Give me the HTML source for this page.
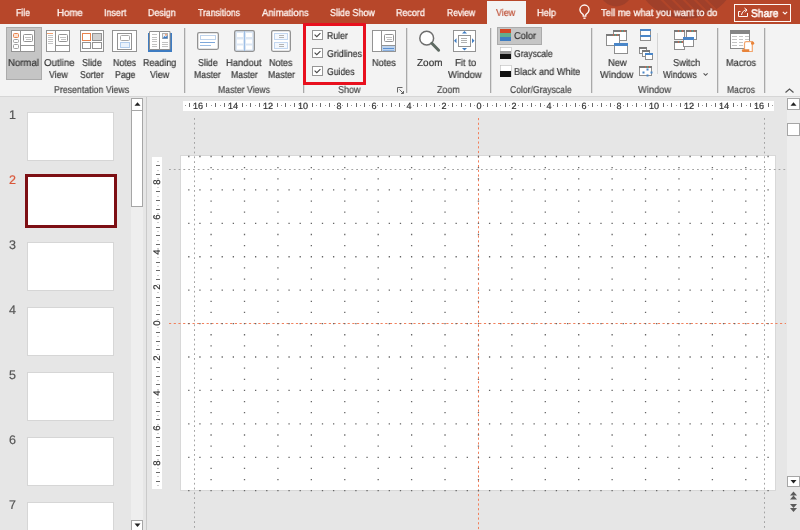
<!DOCTYPE html>
<html><head><meta charset="utf-8"><style>
html,body{margin:0;padding:0;width:800px;height:530px;overflow:hidden;background:#E6E6E6}
.t{position:absolute;white-space:nowrap;font-family:'Liberation Sans', sans-serif;transform-origin:0 0;will-change:transform;text-rendering:geometricPrecision;-webkit-text-stroke:0.2px currentColor}
svg{position:absolute;left:0;top:0}
</style></head><body>
<svg width="800" height="530" viewBox="0 0 800 530">
<rect x="0" y="0" width="800" height="530" fill="#E6E6E6" />
<rect x="0" y="0" width="800" height="24" fill="#B7472A" />
<defs><clipPath id="bc"><circle cx="686" cy="-34.4" r="53.1"/></clipPath></defs>
<circle cx="686" cy="-34.4" r="53.1" fill="#A0402A"/>
<g clip-path="url(#bc)" stroke="#B04529" stroke-width="2"><line x1="660" y1="-2" x2="674" y2="12"/><line x1="671" y1="-2" x2="685" y2="12"/><line x1="682" y1="-2" x2="696" y2="12"/><line x1="693" y1="-2" x2="707" y2="12"/><line x1="704" y1="-2" x2="718" y2="12"/></g>
<circle cx="616" cy="-10" r="16.4" fill="#A0402A"/>
<circle cx="616" cy="-4" r="4" fill="#A84329"/>
<rect x="0" y="24" width="800" height="72" fill="#F3F3F3" />
<rect x="0" y="96" width="800" height="1" fill="#D6D6D6" />
<rect x="487" y="1" width="39" height="23" fill="#F3F3F3" />
<path d="M583.2 16.2 v-1.6 c-2-1.3 -3.3-3 -3.3-5 a4.6 4.6 0 0 1 9.2 0 c0 2 -1.3 3.7 -3.3 5 v1.6 z" fill="none" stroke="#FFF7F4" stroke-width="1.3" />
<line x1="583.4" y1="18.2" x2="585.6" y2="18.2" stroke="#FFF7F4" stroke-width="1.4" />
<rect x="734.5" y="4.5" width="56" height="17" fill="none" stroke="#FFF7F4" stroke-width="1" rx="0" />
<path d="M740.5 11.5 h-2 v5 h9 v-3.5" fill="none" stroke="#FFF7F4" stroke-width="1" />
<path d="M741.5 15 c0.5-3 2.5-5 5.5-5.5 M744.5 8 l2.5 2 l-2 2.3" fill="none" stroke="#FFF7F4" stroke-width="1" />
<path d="M782.8 11.8 l2.2 2.2 l2.2 -2.2" fill="none" stroke="#FFF7F4" stroke-width="1.1" />
<rect x="184" y="28" width="1" height="65" fill="#A9A9A9" />
<rect x="185" y="28" width="1" height="65" fill="#DEDEDE" />
<rect x="303" y="28" width="1" height="65" fill="#A9A9A9" />
<rect x="304" y="28" width="1" height="65" fill="#DEDEDE" />
<rect x="406" y="28" width="1" height="65" fill="#A9A9A9" />
<rect x="407" y="28" width="1" height="65" fill="#DEDEDE" />
<rect x="490" y="28" width="1" height="65" fill="#A9A9A9" />
<rect x="491" y="28" width="1" height="65" fill="#DEDEDE" />
<rect x="591" y="28" width="1" height="65" fill="#A9A9A9" />
<rect x="592" y="28" width="1" height="65" fill="#DEDEDE" />
<rect x="717" y="28" width="1" height="65" fill="#A9A9A9" />
<rect x="718" y="28" width="1" height="65" fill="#DEDEDE" />
<rect x="764" y="28" width="1" height="65" fill="#A9A9A9" />
<rect x="765" y="28" width="1" height="65" fill="#DEDEDE" />
<rect x="657" y="33" width="1" height="41" fill="#D4D4D4" />
<rect x="6.5" y="27.5" width="35" height="52" fill="#C5C5C5" stroke="#ABABAB" stroke-width="1" rx="0" />
<rect x="11.5" y="30.5" width="23" height="21" fill="#FFFFFF" stroke="#939393" stroke-width="1" rx="0" />
<rect x="20" y="31" width="1" height="20" fill="#939393" />
<rect x="21" y="45" width="13" height="1" fill="#939393" />
<rect x="13.5" y="33.5" width="5" height="4" fill="#FBE3D3" stroke="#E8834E" stroke-width="1" rx="1" />
<rect x="13.5" y="39.5" width="5" height="3" fill="#FFF" stroke="#A0A0A0" stroke-width="1" rx="1" />
<rect x="13.5" y="44.5" width="5" height="4" fill="#FFF" stroke="#A0A0A0" stroke-width="1" rx="1" />
<rect x="23.5" y="34.5" width="9" height="7" fill="#FFF" stroke="#939393" stroke-width="1" rx="1" />
<rect x="25" y="37" width="6" height="1" fill="#C0C0C0" />
<rect x="26" y="39" width="5" height="1" fill="#C0C0C0" />
<rect x="46.5" y="30.5" width="23" height="21" fill="#FFF" stroke="#939393" stroke-width="1" rx="0" />
<rect x="55" y="31" width="1" height="20" fill="#939393" />
<rect x="56" y="45" width="13" height="1" fill="#939393" />
<rect x="47" y="33" width="6" height="1" fill="#F0A070" />
<rect x="48" y="35" width="5" height="1" fill="#C4C4C4" />
<rect x="48" y="37" width="5" height="1" fill="#C4C4C4" />
<rect x="48" y="39" width="5" height="1" fill="#C4C4C4" />
<rect x="48" y="41" width="5" height="1" fill="#C4C4C4" />
<rect x="48" y="43" width="5" height="1" fill="#C4C4C4" />
<rect x="58.5" y="34.5" width="9" height="7" fill="#FFF" stroke="#939393" stroke-width="1" rx="1" />
<rect x="60" y="37" width="6" height="1" fill="#C0C0C0" />
<rect x="61" y="39" width="5" height="1" fill="#C0C0C0" />
<rect x="80.5" y="30.5" width="23" height="21" fill="#FFF" stroke="#939393" stroke-width="1" rx="0" />
<rect x="82.5" y="33.5" width="8" height="7" fill="#FFF" stroke="#E8834E" stroke-width="1" rx="0" />
<rect x="92.5" y="33.5" width="9" height="7" fill="#D0D0D0" stroke="#939393" stroke-width="1" rx="0" />
<rect x="82.5" y="42.5" width="8" height="6" fill="#FFF" stroke="#939393" stroke-width="1" rx="0" />
<rect x="92.5" y="42.5" width="9" height="6" fill="#FFF" stroke="#939393" stroke-width="1" rx="0" />
<rect x="112.5" y="30.5" width="24" height="21" fill="#FFF" stroke="#939393" stroke-width="1" rx="0" />
<rect x="117.5" y="33.5" width="14" height="16" fill="#FFF" stroke="#939393" stroke-width="1" rx="0" />
<rect x="120.5" y="35.5" width="9" height="5" fill="#FFF" stroke="#A8A8A8" stroke-width="1" rx="1" />
<rect x="120.5" y="42.5" width="9" height="5" fill="#EAF2FB" stroke="#6FA0D8" stroke-width="1" rx="0" stroke-dasharray="1 1"/>
<rect x="148" y="33" width="24" height="19" fill="#3E7CC2" />
<path d="M149.5 31.5 h10 v18 h-10 z" fill="#FFF" stroke="#8E8E8E" stroke-width="1" />
<path d="M159.5 31.5 h10.5 v18 h-10.5 z" fill="#FFF" stroke="#8E8E8E" stroke-width="1" />
<rect x="152" y="34" width="5" height="1" fill="#C2C2C2" />
<rect x="152" y="37" width="5" height="1" fill="#C2C2C2" />
<rect x="152" y="39" width="5" height="1" fill="#C2C2C2" />
<rect x="152" y="41" width="5" height="1" fill="#C2C2C2" />
<rect x="152" y="44" width="5" height="1" fill="#C2C2C2" />
<rect x="152" y="46" width="5" height="1" fill="#C2C2C2" />
<rect x="162.5" y="33.5" width="5" height="5" fill="#EAF1FA" stroke="#B0B0B0" stroke-width="1" rx="0" />
<path d="M162.5 38.5 l2-2.5 l1.2 1 l1.8-1.8 v3.3 z" fill="#3E7CC2" stroke="none" stroke-width="1" />
<circle cx="166" cy="34.8" r="0.9" fill="#F0894F"/>
<rect x="162" y="42" width="6" height="1" fill="#C2C2C2" />
<rect x="162" y="44" width="6" height="1" fill="#C2C2C2" />
<rect x="162" y="46" width="6" height="1" fill="#C2C2C2" />
<rect x="197.65" y="32.65" width="20.7" height="16.7" fill="#FFF" stroke="#939393" stroke-width="1.3" rx="1.5" />
<rect x="200.5" y="35.5" width="15" height="4" fill="none" stroke="#7DA7D9" stroke-width="1" rx="0" stroke-dasharray="1 1"/>
<rect x="200" y="42" width="15" height="1" fill="#7DA7D9" />
<rect x="200" y="45" width="11" height="1" fill="#9DBEE5" />
<rect x="234.65" y="30.65" width="19.7" height="20.7" fill="#DCE7F4" stroke="#939393" stroke-width="1.3" rx="1.5" />
<rect x="244" y="31" width="1" height="20" fill="#9DBEE5" />
<rect x="237" y="33" width="6" height="4" fill="#FFF" />
<rect x="246" y="33" width="6" height="4" fill="#FFF" />
<rect x="237" y="39.5" width="6" height="4" fill="#FFF" />
<rect x="246" y="39.5" width="6" height="4" fill="#FFF" />
<rect x="237" y="45.5" width="6" height="4" fill="#FFF" />
<rect x="246" y="45.5" width="6" height="4" fill="#FFF" />
<rect x="271.65" y="30.65" width="18.7" height="20.7" fill="#FFF" stroke="#939393" stroke-width="1.3" rx="1.5" />
<rect x="274.5" y="33.5" width="13" height="6" fill="#F4F8FD" stroke="#8DB3E2" stroke-width="1" rx="0" stroke-dasharray="1 1"/>
<rect x="274.5" y="42.5" width="13" height="6" fill="#F4F8FD" stroke="#8DB3E2" stroke-width="1" rx="0" stroke-dasharray="1 1"/>
<rect x="279" y="35" width="5" height="1" fill="#B4B4B4" />
<rect x="279" y="37" width="5" height="1" fill="#B4B4B4" />
<rect x="279" y="44" width="5" height="1" fill="#B4B4B4" />
<rect x="279" y="46" width="5" height="1" fill="#B4B4B4" />
<rect x="312.5" y="30.5" width="10" height="9" fill="#FFFFFF" stroke="#969696" stroke-width="1" rx="0" />
<path d="M314.6 34.6 l2.2 2.1 l3.6 -3.5" fill="none" stroke="#484848" stroke-width="1.1" />
<rect x="312.5" y="48.5" width="10" height="9" fill="#FFFFFF" stroke="#969696" stroke-width="1" rx="0" />
<path d="M314.6 52.6 l2.2 2.1 l3.6 -3.5" fill="none" stroke="#484848" stroke-width="1.1" />
<rect x="312.5" y="66.5" width="10" height="9" fill="#FFFFFF" stroke="#969696" stroke-width="1" rx="0" />
<path d="M314.6 70.6 l2.2 2.1 l3.6 -3.5" fill="none" stroke="#484848" stroke-width="1.1" />
<rect x="372.5" y="30.5" width="23" height="21" fill="#FFF" stroke="#939393" stroke-width="1" rx="0" />
<rect x="381" y="31" width="1" height="20" fill="#939393" />
<rect x="382" y="45" width="13" height="1" fill="#939393" />
<rect x="382" y="46" width="13" height="5" fill="#BCD3EE" />
<rect x="383" y="48" width="11" height="1" fill="#5B8FD0" />
<rect x="383" y="50" width="11" height="1" fill="#8DB3E2" />
<rect x="384.5" y="34.5" width="9" height="7" fill="#FFF" stroke="#939393" stroke-width="1" rx="1" />
<rect x="386" y="37" width="6" height="1" fill="#C0C0C0" />
<rect x="387" y="39" width="5" height="1" fill="#C0C0C0" />
<path d="M397.5 92.5 v-5 h5 M399.5 89.5 l4 4 M401 93.5 h2.5 v-2.5" fill="none" stroke="#666" stroke-width="1" />
<rect x="304.5" y="24.5" width="60" height="59" fill="none" stroke="#E8101E" stroke-width="3" rx="0" />
<circle cx="426.7" cy="38.2" r="6.9" fill="#FFF" stroke="#6E6E6E" stroke-width="1.5"/>
<line x1="431.8" y1="43.3" x2="438.6" y2="50.2" stroke="#5E6A62" stroke-width="3" stroke-linecap="round"/>
<rect x="453.5" y="30.5" width="22" height="21" fill="#FFF" stroke="#939393" stroke-width="1" rx="0" />
<rect x="458.5" y="35.5" width="12" height="11" fill="#FFF" stroke="#939393" stroke-width="1" rx="0" />
<rect x="461" y="38" width="6" height="1" fill="#B0B0B0" />
<rect x="461" y="40" width="6" height="1" fill="#B0B0B0" />
<rect x="461" y="42" width="6" height="1" fill="#B0B0B0" />
<path d="M462 33.5 l2.5-2.5 l2.5 2.5 z" fill="#3E7CC2" stroke="none" stroke-width="1" />
<path d="M462 48 l2.5 2.5 l2.5-2.5 z" fill="#3E7CC2" stroke="none" stroke-width="1" />
<path d="M456.5 38.3 l-2.5 2.5 l2.5 2.5 z" fill="#3E7CC2" stroke="none" stroke-width="1" />
<path d="M472 38.3 l2.5 2.5 l-2.5 2.5 z" fill="#3E7CC2" stroke="none" stroke-width="1" />
<rect x="497.5" y="27.5" width="44" height="17" fill="#C5C5C5" stroke="#ABABAB" stroke-width="1" rx="0" />
<rect x="500" y="29" width="11" height="4" fill="#D24726" />
<rect x="500" y="33" width="11" height="4" fill="#62AD8E" />
<rect x="500" y="37" width="11" height="4" fill="#3F7DC1" />
<rect x="500.3" y="47.3" width="11.4" height="11.4" fill="#FFF" stroke="#BBBBBB" stroke-width="0.6" rx="0" />
<rect x="500" y="51" width="11" height="3" fill="#9A9A9A" />
<rect x="500" y="54" width="11" height="5" fill="#111" />
<rect x="500.3" y="65.3" width="11.4" height="11.4" fill="#FFF" stroke="#BBBBBB" stroke-width="0.6" rx="0" />
<rect x="500" y="71" width="11" height="6" fill="#111" />
<rect x="613.5" y="30.5" width="13" height="10" fill="#FFF" stroke="#8E8E8E" stroke-width="1" rx="0" />
<rect x="613" y="30" width="14" height="2" fill="#7A7A7A" />
<rect x="620" y="30" width="1" height="2" fill="#C46A50" />
<rect x="622" y="30" width="1" height="2" fill="#5E9F86" />
<rect x="624" y="30" width="1" height="2" fill="#C46A50" />
<rect x="606.5" y="34.5" width="13" height="11" fill="#FFF" stroke="#8E8E8E" stroke-width="1" rx="0" />
<rect x="606" y="34" width="14" height="2" fill="#7A7A7A" />
<rect x="613" y="34" width="1" height="2" fill="#C46A50" />
<rect x="615" y="34" width="1" height="2" fill="#5E9F86" />
<rect x="617" y="34" width="1" height="2" fill="#C46A50" />
<rect x="614.5" y="43.5" width="13" height="10" fill="#FFF" stroke="#8E8E8E" stroke-width="1" rx="0" />
<rect x="614" y="43" width="14" height="3" fill="#4A86C8" />
<rect x="640.5" y="29.5" width="10" height="6" fill="#FFF" stroke="#8E8E8E" stroke-width="1" rx="0" />
<rect x="640" y="29" width="11" height="2" fill="#4A86C8" />
<rect x="640.5" y="35.5" width="10" height="5" fill="#FFF" stroke="#8E8E8E" stroke-width="1" rx="0" />
<rect x="640" y="35" width="11" height="2" fill="#4A86C8" />
<rect x="639.5" y="47.5" width="7" height="6" fill="#FFF" stroke="#8E8E8E" stroke-width="1" rx="0" />
<rect x="639" y="47" width="8" height="2" fill="#7A7A7A" />
<rect x="642.5" y="50.5" width="7" height="6" fill="#FFF" stroke="#8E8E8E" stroke-width="1" rx="0" />
<rect x="642" y="50" width="8" height="2" fill="#7A7A7A" />
<rect x="645.5" y="53.5" width="7" height="6" fill="#FFF" stroke="#8E8E8E" stroke-width="1" rx="0" />
<rect x="645" y="53" width="8" height="2" fill="#4A86C8" />
<rect x="639.5" y="66.5" width="12" height="9" fill="#FFF" stroke="#8E8E8E" stroke-width="1" rx="0" />
<rect x="639" y="66" width="13" height="2" fill="#7A7A7A" />
<rect x="645" y="66" width="1" height="2" fill="#C46A50" />
<rect x="647" y="66" width="1" height="2" fill="#5E9F86" />
<rect x="649" y="66" width="1" height="2" fill="#C46A50" />
<rect x="646.5" y="68.5" width="2" height="2" fill="#4A86C8" />
<rect x="642.5" y="71.5" width="2" height="2" fill="#4A86C8" />
<rect x="650.5" y="71.5" width="2" height="2" fill="#4A86C8" />
<rect x="646.5" y="74.5" width="2" height="2" fill="#4A86C8" />
<rect x="674.5" y="30.5" width="10" height="9" fill="#FFF" stroke="#8E8E8E" stroke-width="1" rx="0" />
<rect x="674" y="30" width="11" height="2" fill="#7A7A7A" />
<rect x="678" y="30" width="1" height="2" fill="#C46A50" />
<rect x="680" y="30" width="1" height="2" fill="#5E9F86" />
<rect x="682" y="30" width="1" height="2" fill="#C46A50" />
<rect x="686.5" y="30.5" width="10" height="9" fill="#FFF" stroke="#8E8E8E" stroke-width="1" rx="0" />
<rect x="686" y="30" width="11" height="2" fill="#7A7A7A" />
<rect x="690" y="30" width="1" height="2" fill="#C46A50" />
<rect x="692" y="30" width="1" height="2" fill="#5E9F86" />
<rect x="694" y="30" width="1" height="2" fill="#C46A50" />
<rect x="674.5" y="41.5" width="10" height="8" fill="#FFF" stroke="#8E8E8E" stroke-width="1" rx="0" />
<rect x="674" y="41" width="11" height="2" fill="#7A7A7A" />
<rect x="678" y="41" width="1" height="2" fill="#C46A50" />
<rect x="680" y="41" width="1" height="2" fill="#5E9F86" />
<rect x="682" y="41" width="1" height="2" fill="#C46A50" />
<rect x="683.5" y="37.5" width="10" height="9" fill="#FFF" stroke="#8E8E8E" stroke-width="1" rx="0" />
<rect x="683" y="37" width="11" height="3" fill="#4A86C8" />
<path d="M703.6 73.3 l2 2 l2 -2" fill="none" stroke="#505050" stroke-width="1.1" />
<rect x="730.5" y="30.5" width="19" height="18" fill="#FFF" stroke="#8A8A8A" stroke-width="1" rx="0" />
<rect x="730" y="30" width="20" height="4" fill="#858585" />
<rect x="732" y="36" width="5" height="1" fill="#C4C4C4" />
<rect x="739" y="36" width="4" height="1" fill="#C4C4C4" />
<rect x="745" y="36" width="4" height="1" fill="#C4C4C4" />
<rect x="732" y="39" width="5" height="1" fill="#C4C4C4" />
<rect x="739" y="39" width="4" height="1" fill="#C4C4C4" />
<rect x="745" y="39" width="4" height="1" fill="#C4C4C4" />
<rect x="732" y="42" width="5" height="1" fill="#C4C4C4" />
<rect x="739" y="42" width="4" height="1" fill="#C4C4C4" />
<rect x="745" y="42" width="4" height="1" fill="#C4C4C4" />
<rect x="732" y="45" width="5" height="1" fill="#C4C4C4" />
<rect x="739" y="45" width="4" height="1" fill="#C4C4C4" />
<rect x="745" y="45" width="4" height="1" fill="#C4C4C4" />
<path d="M744.5 49.5 v-6 q0-1.8 1.8-1.8 h6 v9.8 h-7.8 z" fill="#FFF" stroke="#F2A66E" stroke-width="1.2" />
<circle cx="752.6" cy="43.2" r="1.6" fill="#E8833A"/>
<path d="M742.8 49.2 h6.5 v2.8 h-6.5 q-1-0.2 -1-1.4 q0-1.2 1-1.4 z" fill="#E8833A" stroke="none" stroke-width="1" />
<path d="M785.5 92.5 l4 -3.5 l4 3.5" fill="none" stroke="#555" stroke-width="1.2" />
<rect x="146" y="97" width="1" height="433" fill="#CACACA" />
<rect x="131" y="98" width="12" height="432" fill="#EEEEEE" />
<rect x="131.5" y="98.5" width="11" height="12" fill="#FFF" stroke="#A6A6A6" stroke-width="1" rx="0" />
<path d="M134.5 105.8 l3 -3.5 l3 3.5 z" fill="#222" stroke="none" stroke-width="1" />
<rect x="131.5" y="110.5" width="11" height="96" fill="#FFF" stroke="#A6A6A6" stroke-width="1" rx="0" />
<rect x="131.5" y="520.5" width="11" height="12" fill="#FFF" stroke="#A6A6A6" stroke-width="1" rx="0" />
<path d="M134.5 523.5 l3 3.5 l3 -3.5 z" fill="#222" stroke="none" stroke-width="1" />
<rect x="27.5" y="112.5" width="86" height="48" fill="#FFF" stroke="#D6D6D6" stroke-width="1" rx="0" />
<rect x="25" y="174" width="92" height="54" fill="#7D0F14" />
<rect x="28" y="177" width="86" height="48" fill="#FFF" />
<rect x="27.5" y="242.5" width="86" height="48" fill="#FFF" stroke="#D6D6D6" stroke-width="1" rx="0" />
<rect x="27.5" y="307.5" width="86" height="48" fill="#FFF" stroke="#D6D6D6" stroke-width="1" rx="0" />
<rect x="27.5" y="372.5" width="86" height="48" fill="#FFF" stroke="#D6D6D6" stroke-width="1" rx="0" />
<rect x="27.5" y="437.5" width="86" height="48" fill="#FFF" stroke="#D6D6D6" stroke-width="1" rx="0" />
<rect x="27.5" y="502.5" width="86" height="48" fill="#FFF" stroke="#D6D6D6" stroke-width="1" rx="0" />
<rect x="787" y="97" width="13" height="390" fill="#EEEEEE" />
<rect x="787.5" y="98.5" width="12" height="11" fill="#FFF" stroke="#A6A6A6" stroke-width="1" rx="0" />
<path d="M790.5 105.8 l3 -3.5 l3 3.5 z" fill="#222" stroke="none" stroke-width="1" />
<rect x="787.5" y="123.5" width="12" height="12" fill="#FFF" stroke="#A6A6A6" stroke-width="1" rx="0" />
<rect x="787.5" y="476.5" width="12" height="10" fill="#FFF" stroke="#A6A6A6" stroke-width="1" rx="0" />
<path d="M790.5 480 l3 3.5 l3 -3.5 z" fill="#222" stroke="none" stroke-width="1" />
<path d="M790 495.5 l3.5 -4 l3.5 4 z M790 499.5 l3.5 -4 l3.5 4 z" fill="#5A5A5A" stroke="none" stroke-width="1" />
<path d="M790 504 l3.5 4 l3.5 -4 z M790 508 l3.5 4 l3.5 -4 z" fill="#5A5A5A" stroke="none" stroke-width="1" />
<rect x="183" y="101" width="591" height="10" fill="#FFFFFF" />
<rect x="152" y="157" width="10" height="332" fill="#FFFFFF" />
<rect x="185" y="105" width="1" height="1" fill="#9A9A9A" />
<rect x="189" y="103" width="1" height="4" fill="#6A6A6A" />
<rect x="193" y="105" width="1" height="1" fill="#9A9A9A" />
<rect x="202" y="105" width="1" height="1" fill="#9A9A9A" />
<rect x="206" y="103" width="1" height="4" fill="#6A6A6A" />
<rect x="211" y="105" width="1" height="1" fill="#9A9A9A" />
<rect x="215" y="103" width="1" height="4" fill="#6A6A6A" />
<rect x="220" y="105" width="1" height="1" fill="#9A9A9A" />
<rect x="224" y="103" width="1" height="4" fill="#6A6A6A" />
<rect x="228" y="105" width="1" height="1" fill="#9A9A9A" />
<rect x="237" y="105" width="1" height="1" fill="#9A9A9A" />
<rect x="242" y="103" width="1" height="4" fill="#6A6A6A" />
<rect x="246" y="105" width="1" height="1" fill="#9A9A9A" />
<rect x="250" y="103" width="1" height="4" fill="#6A6A6A" />
<rect x="255" y="105" width="1" height="1" fill="#9A9A9A" />
<rect x="259" y="103" width="1" height="4" fill="#6A6A6A" />
<rect x="263" y="105" width="1" height="1" fill="#9A9A9A" />
<rect x="272" y="105" width="1" height="1" fill="#9A9A9A" />
<rect x="277" y="103" width="1" height="4" fill="#6A6A6A" />
<rect x="281" y="105" width="1" height="1" fill="#9A9A9A" />
<rect x="285" y="103" width="1" height="4" fill="#6A6A6A" />
<rect x="290" y="105" width="1" height="1" fill="#9A9A9A" />
<rect x="294" y="103" width="1" height="4" fill="#6A6A6A" />
<rect x="299" y="105" width="1" height="1" fill="#9A9A9A" />
<rect x="307" y="105" width="1" height="1" fill="#9A9A9A" />
<rect x="312" y="103" width="1" height="4" fill="#6A6A6A" />
<rect x="316" y="105" width="1" height="1" fill="#9A9A9A" />
<rect x="320" y="103" width="1" height="4" fill="#6A6A6A" />
<rect x="325" y="105" width="1" height="1" fill="#9A9A9A" />
<rect x="329" y="103" width="1" height="4" fill="#6A6A6A" />
<rect x="334" y="105" width="1" height="1" fill="#9A9A9A" />
<rect x="342" y="105" width="1" height="1" fill="#9A9A9A" />
<rect x="347" y="103" width="1" height="4" fill="#6A6A6A" />
<rect x="351" y="105" width="1" height="1" fill="#9A9A9A" />
<rect x="356" y="103" width="1" height="4" fill="#6A6A6A" />
<rect x="360" y="105" width="1" height="1" fill="#9A9A9A" />
<rect x="364" y="103" width="1" height="4" fill="#6A6A6A" />
<rect x="369" y="105" width="1" height="1" fill="#9A9A9A" />
<rect x="377" y="105" width="1" height="1" fill="#9A9A9A" />
<rect x="382" y="103" width="1" height="4" fill="#6A6A6A" />
<rect x="386" y="105" width="1" height="1" fill="#9A9A9A" />
<rect x="391" y="103" width="1" height="4" fill="#6A6A6A" />
<rect x="395" y="105" width="1" height="1" fill="#9A9A9A" />
<rect x="399" y="103" width="1" height="4" fill="#6A6A6A" />
<rect x="404" y="105" width="1" height="1" fill="#9A9A9A" />
<rect x="413" y="105" width="1" height="1" fill="#9A9A9A" />
<rect x="417" y="103" width="1" height="4" fill="#6A6A6A" />
<rect x="421" y="105" width="1" height="1" fill="#9A9A9A" />
<rect x="426" y="103" width="1" height="4" fill="#6A6A6A" />
<rect x="430" y="105" width="1" height="1" fill="#9A9A9A" />
<rect x="434" y="103" width="1" height="4" fill="#6A6A6A" />
<rect x="439" y="105" width="1" height="1" fill="#9A9A9A" />
<rect x="448" y="105" width="1" height="1" fill="#9A9A9A" />
<rect x="452" y="103" width="1" height="4" fill="#6A6A6A" />
<rect x="456" y="105" width="1" height="1" fill="#9A9A9A" />
<rect x="461" y="103" width="1" height="4" fill="#6A6A6A" />
<rect x="465" y="105" width="1" height="1" fill="#9A9A9A" />
<rect x="470" y="103" width="1" height="4" fill="#6A6A6A" />
<rect x="474" y="105" width="1" height="1" fill="#9A9A9A" />
<rect x="483" y="105" width="1" height="1" fill="#9A9A9A" />
<rect x="487" y="103" width="1" height="4" fill="#6A6A6A" />
<rect x="492" y="105" width="1" height="1" fill="#9A9A9A" />
<rect x="496" y="103" width="1" height="4" fill="#6A6A6A" />
<rect x="500" y="105" width="1" height="1" fill="#9A9A9A" />
<rect x="505" y="103" width="1" height="4" fill="#6A6A6A" />
<rect x="509" y="105" width="1" height="1" fill="#9A9A9A" />
<rect x="518" y="105" width="1" height="1" fill="#9A9A9A" />
<rect x="522" y="103" width="1" height="4" fill="#6A6A6A" />
<rect x="527" y="105" width="1" height="1" fill="#9A9A9A" />
<rect x="531" y="103" width="1" height="4" fill="#6A6A6A" />
<rect x="535" y="105" width="1" height="1" fill="#9A9A9A" />
<rect x="540" y="103" width="1" height="4" fill="#6A6A6A" />
<rect x="544" y="105" width="1" height="1" fill="#9A9A9A" />
<rect x="553" y="105" width="1" height="1" fill="#9A9A9A" />
<rect x="557" y="103" width="1" height="4" fill="#6A6A6A" />
<rect x="562" y="105" width="1" height="1" fill="#9A9A9A" />
<rect x="566" y="103" width="1" height="4" fill="#6A6A6A" />
<rect x="570" y="105" width="1" height="1" fill="#9A9A9A" />
<rect x="575" y="103" width="1" height="4" fill="#6A6A6A" />
<rect x="579" y="105" width="1" height="1" fill="#9A9A9A" />
<rect x="588" y="105" width="1" height="1" fill="#9A9A9A" />
<rect x="592" y="103" width="1" height="4" fill="#6A6A6A" />
<rect x="597" y="105" width="1" height="1" fill="#9A9A9A" />
<rect x="601" y="103" width="1" height="4" fill="#6A6A6A" />
<rect x="606" y="105" width="1" height="1" fill="#9A9A9A" />
<rect x="610" y="103" width="1" height="4" fill="#6A6A6A" />
<rect x="614" y="105" width="1" height="1" fill="#9A9A9A" />
<rect x="623" y="105" width="1" height="1" fill="#9A9A9A" />
<rect x="627" y="103" width="1" height="4" fill="#6A6A6A" />
<rect x="632" y="105" width="1" height="1" fill="#9A9A9A" />
<rect x="636" y="103" width="1" height="4" fill="#6A6A6A" />
<rect x="641" y="105" width="1" height="1" fill="#9A9A9A" />
<rect x="645" y="103" width="1" height="4" fill="#6A6A6A" />
<rect x="649" y="105" width="1" height="1" fill="#9A9A9A" />
<rect x="658" y="105" width="1" height="1" fill="#9A9A9A" />
<rect x="663" y="103" width="1" height="4" fill="#6A6A6A" />
<rect x="667" y="105" width="1" height="1" fill="#9A9A9A" />
<rect x="671" y="103" width="1" height="4" fill="#6A6A6A" />
<rect x="676" y="105" width="1" height="1" fill="#9A9A9A" />
<rect x="680" y="103" width="1" height="4" fill="#6A6A6A" />
<rect x="684" y="105" width="1" height="1" fill="#9A9A9A" />
<rect x="693" y="105" width="1" height="1" fill="#9A9A9A" />
<rect x="698" y="103" width="1" height="4" fill="#6A6A6A" />
<rect x="702" y="105" width="1" height="1" fill="#9A9A9A" />
<rect x="706" y="103" width="1" height="4" fill="#6A6A6A" />
<rect x="711" y="105" width="1" height="1" fill="#9A9A9A" />
<rect x="715" y="103" width="1" height="4" fill="#6A6A6A" />
<rect x="720" y="105" width="1" height="1" fill="#9A9A9A" />
<rect x="728" y="105" width="1" height="1" fill="#9A9A9A" />
<rect x="733" y="103" width="1" height="4" fill="#6A6A6A" />
<rect x="737" y="105" width="1" height="1" fill="#9A9A9A" />
<rect x="741" y="103" width="1" height="4" fill="#6A6A6A" />
<rect x="746" y="105" width="1" height="1" fill="#9A9A9A" />
<rect x="750" y="103" width="1" height="4" fill="#6A6A6A" />
<rect x="755" y="105" width="1" height="1" fill="#9A9A9A" />
<rect x="763" y="105" width="1" height="1" fill="#9A9A9A" />
<rect x="768" y="103" width="1" height="4" fill="#6A6A6A" />
<rect x="772" y="105" width="1" height="1" fill="#9A9A9A" />
<rect x="157.5" y="161" width="1" height="1" fill="#9A9A9A" />
<rect x="156" y="165" width="4" height="1" fill="#6A6A6A" />
<rect x="157.5" y="170" width="1" height="1" fill="#9A9A9A" />
<rect x="156" y="174" width="4" height="1" fill="#6A6A6A" />
<rect x="157.5" y="178" width="1" height="1" fill="#9A9A9A" />
<rect x="157.5" y="187" width="1" height="1" fill="#9A9A9A" />
<rect x="156" y="191" width="4" height="1" fill="#6A6A6A" />
<rect x="157.5" y="196" width="1" height="1" fill="#9A9A9A" />
<rect x="156" y="200" width="4" height="1" fill="#6A6A6A" />
<rect x="157.5" y="205" width="1" height="1" fill="#9A9A9A" />
<rect x="156" y="209" width="4" height="1" fill="#6A6A6A" />
<rect x="157.5" y="213" width="1" height="1" fill="#9A9A9A" />
<rect x="157.5" y="222" width="1" height="1" fill="#9A9A9A" />
<rect x="156" y="227" width="4" height="1" fill="#6A6A6A" />
<rect x="157.5" y="231" width="1" height="1" fill="#9A9A9A" />
<rect x="156" y="235" width="4" height="1" fill="#6A6A6A" />
<rect x="157.5" y="240" width="1" height="1" fill="#9A9A9A" />
<rect x="156" y="244" width="4" height="1" fill="#6A6A6A" />
<rect x="157.5" y="248" width="1" height="1" fill="#9A9A9A" />
<rect x="157.5" y="257" width="1" height="1" fill="#9A9A9A" />
<rect x="156" y="262" width="4" height="1" fill="#6A6A6A" />
<rect x="157.5" y="266" width="1" height="1" fill="#9A9A9A" />
<rect x="156" y="270" width="4" height="1" fill="#6A6A6A" />
<rect x="157.5" y="275" width="1" height="1" fill="#9A9A9A" />
<rect x="156" y="279" width="4" height="1" fill="#6A6A6A" />
<rect x="157.5" y="284" width="1" height="1" fill="#9A9A9A" />
<rect x="157.5" y="292" width="1" height="1" fill="#9A9A9A" />
<rect x="156" y="297" width="4" height="1" fill="#6A6A6A" />
<rect x="157.5" y="301" width="1" height="1" fill="#9A9A9A" />
<rect x="156" y="305" width="4" height="1" fill="#6A6A6A" />
<rect x="157.5" y="310" width="1" height="1" fill="#9A9A9A" />
<rect x="156" y="314" width="4" height="1" fill="#6A6A6A" />
<rect x="157.5" y="319" width="1" height="1" fill="#9A9A9A" />
<rect x="157.5" y="327" width="1" height="1" fill="#9A9A9A" />
<rect x="156" y="332" width="4" height="1" fill="#6A6A6A" />
<rect x="157.5" y="336" width="1" height="1" fill="#9A9A9A" />
<rect x="156" y="341" width="4" height="1" fill="#6A6A6A" />
<rect x="157.5" y="345" width="1" height="1" fill="#9A9A9A" />
<rect x="156" y="349" width="4" height="1" fill="#6A6A6A" />
<rect x="157.5" y="354" width="1" height="1" fill="#9A9A9A" />
<rect x="157.5" y="362" width="1" height="1" fill="#9A9A9A" />
<rect x="156" y="367" width="4" height="1" fill="#6A6A6A" />
<rect x="157.5" y="371" width="1" height="1" fill="#9A9A9A" />
<rect x="156" y="376" width="4" height="1" fill="#6A6A6A" />
<rect x="157.5" y="380" width="1" height="1" fill="#9A9A9A" />
<rect x="156" y="384" width="4" height="1" fill="#6A6A6A" />
<rect x="157.5" y="389" width="1" height="1" fill="#9A9A9A" />
<rect x="157.5" y="398" width="1" height="1" fill="#9A9A9A" />
<rect x="156" y="402" width="4" height="1" fill="#6A6A6A" />
<rect x="157.5" y="406" width="1" height="1" fill="#9A9A9A" />
<rect x="156" y="411" width="4" height="1" fill="#6A6A6A" />
<rect x="157.5" y="415" width="1" height="1" fill="#9A9A9A" />
<rect x="156" y="419" width="4" height="1" fill="#6A6A6A" />
<rect x="157.5" y="424" width="1" height="1" fill="#9A9A9A" />
<rect x="157.5" y="433" width="1" height="1" fill="#9A9A9A" />
<rect x="156" y="437" width="4" height="1" fill="#6A6A6A" />
<rect x="157.5" y="441" width="1" height="1" fill="#9A9A9A" />
<rect x="156" y="446" width="4" height="1" fill="#6A6A6A" />
<rect x="157.5" y="450" width="1" height="1" fill="#9A9A9A" />
<rect x="156" y="455" width="4" height="1" fill="#6A6A6A" />
<rect x="157.5" y="459" width="1" height="1" fill="#9A9A9A" />
<rect x="157.5" y="468" width="1" height="1" fill="#9A9A9A" />
<rect x="156" y="472" width="4" height="1" fill="#6A6A6A" />
<rect x="157.5" y="476" width="1" height="1" fill="#9A9A9A" />
<rect x="156" y="481" width="4" height="1" fill="#6A6A6A" />
<rect x="157.5" y="485" width="1" height="1" fill="#9A9A9A" />
<rect x="180.5" y="155.5" width="595" height="335" fill="#FFFFFF" stroke="#D8D8D8" stroke-width="1" rx="0" />
<line x1="194.5" y1="118" x2="194.5" y2="530" stroke="#A4A4A4" stroke-width="1" stroke-dasharray="1.8 3"/>
<line x1="764.5" y1="118" x2="764.5" y2="530" stroke="#A4A4A4" stroke-width="1" stroke-dasharray="1.8 3"/>
<line x1="169" y1="169.5" x2="786" y2="169.5" stroke="#A4A4A4" stroke-width="1" stroke-dasharray="1.8 3"/>
<line x1="478.5" y1="118" x2="478.5" y2="530" stroke="#F2805C" stroke-width="1" stroke-dasharray="2.2 2.5"/>
<line x1="169" y1="323.5" x2="786" y2="323.5" stroke="#F2805C" stroke-width="1" stroke-dasharray="2.2 2.5"/>
<path d="M188.16 155.85h1.3v1.3h-1.3zM188.16 189.27h1.3v1.3h-1.3zM188.16 222.69h1.3v1.3h-1.3zM188.16 256.11h1.3v1.3h-1.3zM188.16 289.53h1.3v1.3h-1.3zM188.16 322.95h1.3v1.3h-1.3zM188.16 356.37h1.3v1.3h-1.3zM188.16 389.79h1.3v1.3h-1.3zM188.16 423.21h1.3v1.3h-1.3zM188.16 456.63h1.3v1.3h-1.3zM188.16 490.05h1.3v1.3h-1.3zM199.30 155.85h1.3v1.3h-1.3zM199.30 189.27h1.3v1.3h-1.3zM199.30 222.69h1.3v1.3h-1.3zM199.30 256.11h1.3v1.3h-1.3zM199.30 289.53h1.3v1.3h-1.3zM199.30 322.95h1.3v1.3h-1.3zM199.30 356.37h1.3v1.3h-1.3zM199.30 389.79h1.3v1.3h-1.3zM199.30 423.21h1.3v1.3h-1.3zM199.30 456.63h1.3v1.3h-1.3zM199.30 490.05h1.3v1.3h-1.3zM210.44 155.85h1.3v1.3h-1.3zM210.44 166.99h1.3v1.3h-1.3zM210.44 178.13h1.3v1.3h-1.3zM210.44 189.27h1.3v1.3h-1.3zM210.44 200.41h1.3v1.3h-1.3zM210.44 211.55h1.3v1.3h-1.3zM210.44 222.69h1.3v1.3h-1.3zM210.44 233.83h1.3v1.3h-1.3zM210.44 244.97h1.3v1.3h-1.3zM210.44 256.11h1.3v1.3h-1.3zM210.44 267.25h1.3v1.3h-1.3zM210.44 278.39h1.3v1.3h-1.3zM210.44 289.53h1.3v1.3h-1.3zM210.44 300.67h1.3v1.3h-1.3zM210.44 311.81h1.3v1.3h-1.3zM210.44 322.95h1.3v1.3h-1.3zM210.44 334.09h1.3v1.3h-1.3zM210.44 345.23h1.3v1.3h-1.3zM210.44 356.37h1.3v1.3h-1.3zM210.44 367.51h1.3v1.3h-1.3zM210.44 378.65h1.3v1.3h-1.3zM210.44 389.79h1.3v1.3h-1.3zM210.44 400.93h1.3v1.3h-1.3zM210.44 412.07h1.3v1.3h-1.3zM210.44 423.21h1.3v1.3h-1.3zM210.44 434.35h1.3v1.3h-1.3zM210.44 445.49h1.3v1.3h-1.3zM210.44 456.63h1.3v1.3h-1.3zM210.44 467.77h1.3v1.3h-1.3zM210.44 478.91h1.3v1.3h-1.3zM210.44 490.05h1.3v1.3h-1.3zM221.58 155.85h1.3v1.3h-1.3zM221.58 189.27h1.3v1.3h-1.3zM221.58 222.69h1.3v1.3h-1.3zM221.58 256.11h1.3v1.3h-1.3zM221.58 289.53h1.3v1.3h-1.3zM221.58 322.95h1.3v1.3h-1.3zM221.58 356.37h1.3v1.3h-1.3zM221.58 389.79h1.3v1.3h-1.3zM221.58 423.21h1.3v1.3h-1.3zM221.58 456.63h1.3v1.3h-1.3zM221.58 490.05h1.3v1.3h-1.3zM232.72 155.85h1.3v1.3h-1.3zM232.72 189.27h1.3v1.3h-1.3zM232.72 222.69h1.3v1.3h-1.3zM232.72 256.11h1.3v1.3h-1.3zM232.72 289.53h1.3v1.3h-1.3zM232.72 322.95h1.3v1.3h-1.3zM232.72 356.37h1.3v1.3h-1.3zM232.72 389.79h1.3v1.3h-1.3zM232.72 423.21h1.3v1.3h-1.3zM232.72 456.63h1.3v1.3h-1.3zM232.72 490.05h1.3v1.3h-1.3zM243.86 155.85h1.3v1.3h-1.3zM243.86 166.99h1.3v1.3h-1.3zM243.86 178.13h1.3v1.3h-1.3zM243.86 189.27h1.3v1.3h-1.3zM243.86 200.41h1.3v1.3h-1.3zM243.86 211.55h1.3v1.3h-1.3zM243.86 222.69h1.3v1.3h-1.3zM243.86 233.83h1.3v1.3h-1.3zM243.86 244.97h1.3v1.3h-1.3zM243.86 256.11h1.3v1.3h-1.3zM243.86 267.25h1.3v1.3h-1.3zM243.86 278.39h1.3v1.3h-1.3zM243.86 289.53h1.3v1.3h-1.3zM243.86 300.67h1.3v1.3h-1.3zM243.86 311.81h1.3v1.3h-1.3zM243.86 322.95h1.3v1.3h-1.3zM243.86 334.09h1.3v1.3h-1.3zM243.86 345.23h1.3v1.3h-1.3zM243.86 356.37h1.3v1.3h-1.3zM243.86 367.51h1.3v1.3h-1.3zM243.86 378.65h1.3v1.3h-1.3zM243.86 389.79h1.3v1.3h-1.3zM243.86 400.93h1.3v1.3h-1.3zM243.86 412.07h1.3v1.3h-1.3zM243.86 423.21h1.3v1.3h-1.3zM243.86 434.35h1.3v1.3h-1.3zM243.86 445.49h1.3v1.3h-1.3zM243.86 456.63h1.3v1.3h-1.3zM243.86 467.77h1.3v1.3h-1.3zM243.86 478.91h1.3v1.3h-1.3zM243.86 490.05h1.3v1.3h-1.3zM255.00 155.85h1.3v1.3h-1.3zM255.00 189.27h1.3v1.3h-1.3zM255.00 222.69h1.3v1.3h-1.3zM255.00 256.11h1.3v1.3h-1.3zM255.00 289.53h1.3v1.3h-1.3zM255.00 322.95h1.3v1.3h-1.3zM255.00 356.37h1.3v1.3h-1.3zM255.00 389.79h1.3v1.3h-1.3zM255.00 423.21h1.3v1.3h-1.3zM255.00 456.63h1.3v1.3h-1.3zM255.00 490.05h1.3v1.3h-1.3zM266.14 155.85h1.3v1.3h-1.3zM266.14 189.27h1.3v1.3h-1.3zM266.14 222.69h1.3v1.3h-1.3zM266.14 256.11h1.3v1.3h-1.3zM266.14 289.53h1.3v1.3h-1.3zM266.14 322.95h1.3v1.3h-1.3zM266.14 356.37h1.3v1.3h-1.3zM266.14 389.79h1.3v1.3h-1.3zM266.14 423.21h1.3v1.3h-1.3zM266.14 456.63h1.3v1.3h-1.3zM266.14 490.05h1.3v1.3h-1.3zM277.28 155.85h1.3v1.3h-1.3zM277.28 166.99h1.3v1.3h-1.3zM277.28 178.13h1.3v1.3h-1.3zM277.28 189.27h1.3v1.3h-1.3zM277.28 200.41h1.3v1.3h-1.3zM277.28 211.55h1.3v1.3h-1.3zM277.28 222.69h1.3v1.3h-1.3zM277.28 233.83h1.3v1.3h-1.3zM277.28 244.97h1.3v1.3h-1.3zM277.28 256.11h1.3v1.3h-1.3zM277.28 267.25h1.3v1.3h-1.3zM277.28 278.39h1.3v1.3h-1.3zM277.28 289.53h1.3v1.3h-1.3zM277.28 300.67h1.3v1.3h-1.3zM277.28 311.81h1.3v1.3h-1.3zM277.28 322.95h1.3v1.3h-1.3zM277.28 334.09h1.3v1.3h-1.3zM277.28 345.23h1.3v1.3h-1.3zM277.28 356.37h1.3v1.3h-1.3zM277.28 367.51h1.3v1.3h-1.3zM277.28 378.65h1.3v1.3h-1.3zM277.28 389.79h1.3v1.3h-1.3zM277.28 400.93h1.3v1.3h-1.3zM277.28 412.07h1.3v1.3h-1.3zM277.28 423.21h1.3v1.3h-1.3zM277.28 434.35h1.3v1.3h-1.3zM277.28 445.49h1.3v1.3h-1.3zM277.28 456.63h1.3v1.3h-1.3zM277.28 467.77h1.3v1.3h-1.3zM277.28 478.91h1.3v1.3h-1.3zM277.28 490.05h1.3v1.3h-1.3zM288.42 155.85h1.3v1.3h-1.3zM288.42 189.27h1.3v1.3h-1.3zM288.42 222.69h1.3v1.3h-1.3zM288.42 256.11h1.3v1.3h-1.3zM288.42 289.53h1.3v1.3h-1.3zM288.42 322.95h1.3v1.3h-1.3zM288.42 356.37h1.3v1.3h-1.3zM288.42 389.79h1.3v1.3h-1.3zM288.42 423.21h1.3v1.3h-1.3zM288.42 456.63h1.3v1.3h-1.3zM288.42 490.05h1.3v1.3h-1.3zM299.56 155.85h1.3v1.3h-1.3zM299.56 189.27h1.3v1.3h-1.3zM299.56 222.69h1.3v1.3h-1.3zM299.56 256.11h1.3v1.3h-1.3zM299.56 289.53h1.3v1.3h-1.3zM299.56 322.95h1.3v1.3h-1.3zM299.56 356.37h1.3v1.3h-1.3zM299.56 389.79h1.3v1.3h-1.3zM299.56 423.21h1.3v1.3h-1.3zM299.56 456.63h1.3v1.3h-1.3zM299.56 490.05h1.3v1.3h-1.3zM310.70 155.85h1.3v1.3h-1.3zM310.70 166.99h1.3v1.3h-1.3zM310.70 178.13h1.3v1.3h-1.3zM310.70 189.27h1.3v1.3h-1.3zM310.70 200.41h1.3v1.3h-1.3zM310.70 211.55h1.3v1.3h-1.3zM310.70 222.69h1.3v1.3h-1.3zM310.70 233.83h1.3v1.3h-1.3zM310.70 244.97h1.3v1.3h-1.3zM310.70 256.11h1.3v1.3h-1.3zM310.70 267.25h1.3v1.3h-1.3zM310.70 278.39h1.3v1.3h-1.3zM310.70 289.53h1.3v1.3h-1.3zM310.70 300.67h1.3v1.3h-1.3zM310.70 311.81h1.3v1.3h-1.3zM310.70 322.95h1.3v1.3h-1.3zM310.70 334.09h1.3v1.3h-1.3zM310.70 345.23h1.3v1.3h-1.3zM310.70 356.37h1.3v1.3h-1.3zM310.70 367.51h1.3v1.3h-1.3zM310.70 378.65h1.3v1.3h-1.3zM310.70 389.79h1.3v1.3h-1.3zM310.70 400.93h1.3v1.3h-1.3zM310.70 412.07h1.3v1.3h-1.3zM310.70 423.21h1.3v1.3h-1.3zM310.70 434.35h1.3v1.3h-1.3zM310.70 445.49h1.3v1.3h-1.3zM310.70 456.63h1.3v1.3h-1.3zM310.70 467.77h1.3v1.3h-1.3zM310.70 478.91h1.3v1.3h-1.3zM310.70 490.05h1.3v1.3h-1.3zM321.84 155.85h1.3v1.3h-1.3zM321.84 189.27h1.3v1.3h-1.3zM321.84 222.69h1.3v1.3h-1.3zM321.84 256.11h1.3v1.3h-1.3zM321.84 289.53h1.3v1.3h-1.3zM321.84 322.95h1.3v1.3h-1.3zM321.84 356.37h1.3v1.3h-1.3zM321.84 389.79h1.3v1.3h-1.3zM321.84 423.21h1.3v1.3h-1.3zM321.84 456.63h1.3v1.3h-1.3zM321.84 490.05h1.3v1.3h-1.3zM332.98 155.85h1.3v1.3h-1.3zM332.98 189.27h1.3v1.3h-1.3zM332.98 222.69h1.3v1.3h-1.3zM332.98 256.11h1.3v1.3h-1.3zM332.98 289.53h1.3v1.3h-1.3zM332.98 322.95h1.3v1.3h-1.3zM332.98 356.37h1.3v1.3h-1.3zM332.98 389.79h1.3v1.3h-1.3zM332.98 423.21h1.3v1.3h-1.3zM332.98 456.63h1.3v1.3h-1.3zM332.98 490.05h1.3v1.3h-1.3zM344.12 155.85h1.3v1.3h-1.3zM344.12 166.99h1.3v1.3h-1.3zM344.12 178.13h1.3v1.3h-1.3zM344.12 189.27h1.3v1.3h-1.3zM344.12 200.41h1.3v1.3h-1.3zM344.12 211.55h1.3v1.3h-1.3zM344.12 222.69h1.3v1.3h-1.3zM344.12 233.83h1.3v1.3h-1.3zM344.12 244.97h1.3v1.3h-1.3zM344.12 256.11h1.3v1.3h-1.3zM344.12 267.25h1.3v1.3h-1.3zM344.12 278.39h1.3v1.3h-1.3zM344.12 289.53h1.3v1.3h-1.3zM344.12 300.67h1.3v1.3h-1.3zM344.12 311.81h1.3v1.3h-1.3zM344.12 322.95h1.3v1.3h-1.3zM344.12 334.09h1.3v1.3h-1.3zM344.12 345.23h1.3v1.3h-1.3zM344.12 356.37h1.3v1.3h-1.3zM344.12 367.51h1.3v1.3h-1.3zM344.12 378.65h1.3v1.3h-1.3zM344.12 389.79h1.3v1.3h-1.3zM344.12 400.93h1.3v1.3h-1.3zM344.12 412.07h1.3v1.3h-1.3zM344.12 423.21h1.3v1.3h-1.3zM344.12 434.35h1.3v1.3h-1.3zM344.12 445.49h1.3v1.3h-1.3zM344.12 456.63h1.3v1.3h-1.3zM344.12 467.77h1.3v1.3h-1.3zM344.12 478.91h1.3v1.3h-1.3zM344.12 490.05h1.3v1.3h-1.3zM355.26 155.85h1.3v1.3h-1.3zM355.26 189.27h1.3v1.3h-1.3zM355.26 222.69h1.3v1.3h-1.3zM355.26 256.11h1.3v1.3h-1.3zM355.26 289.53h1.3v1.3h-1.3zM355.26 322.95h1.3v1.3h-1.3zM355.26 356.37h1.3v1.3h-1.3zM355.26 389.79h1.3v1.3h-1.3zM355.26 423.21h1.3v1.3h-1.3zM355.26 456.63h1.3v1.3h-1.3zM355.26 490.05h1.3v1.3h-1.3zM366.40 155.85h1.3v1.3h-1.3zM366.40 189.27h1.3v1.3h-1.3zM366.40 222.69h1.3v1.3h-1.3zM366.40 256.11h1.3v1.3h-1.3zM366.40 289.53h1.3v1.3h-1.3zM366.40 322.95h1.3v1.3h-1.3zM366.40 356.37h1.3v1.3h-1.3zM366.40 389.79h1.3v1.3h-1.3zM366.40 423.21h1.3v1.3h-1.3zM366.40 456.63h1.3v1.3h-1.3zM366.40 490.05h1.3v1.3h-1.3zM377.54 155.85h1.3v1.3h-1.3zM377.54 166.99h1.3v1.3h-1.3zM377.54 178.13h1.3v1.3h-1.3zM377.54 189.27h1.3v1.3h-1.3zM377.54 200.41h1.3v1.3h-1.3zM377.54 211.55h1.3v1.3h-1.3zM377.54 222.69h1.3v1.3h-1.3zM377.54 233.83h1.3v1.3h-1.3zM377.54 244.97h1.3v1.3h-1.3zM377.54 256.11h1.3v1.3h-1.3zM377.54 267.25h1.3v1.3h-1.3zM377.54 278.39h1.3v1.3h-1.3zM377.54 289.53h1.3v1.3h-1.3zM377.54 300.67h1.3v1.3h-1.3zM377.54 311.81h1.3v1.3h-1.3zM377.54 322.95h1.3v1.3h-1.3zM377.54 334.09h1.3v1.3h-1.3zM377.54 345.23h1.3v1.3h-1.3zM377.54 356.37h1.3v1.3h-1.3zM377.54 367.51h1.3v1.3h-1.3zM377.54 378.65h1.3v1.3h-1.3zM377.54 389.79h1.3v1.3h-1.3zM377.54 400.93h1.3v1.3h-1.3zM377.54 412.07h1.3v1.3h-1.3zM377.54 423.21h1.3v1.3h-1.3zM377.54 434.35h1.3v1.3h-1.3zM377.54 445.49h1.3v1.3h-1.3zM377.54 456.63h1.3v1.3h-1.3zM377.54 467.77h1.3v1.3h-1.3zM377.54 478.91h1.3v1.3h-1.3zM377.54 490.05h1.3v1.3h-1.3zM388.68 155.85h1.3v1.3h-1.3zM388.68 189.27h1.3v1.3h-1.3zM388.68 222.69h1.3v1.3h-1.3zM388.68 256.11h1.3v1.3h-1.3zM388.68 289.53h1.3v1.3h-1.3zM388.68 322.95h1.3v1.3h-1.3zM388.68 356.37h1.3v1.3h-1.3zM388.68 389.79h1.3v1.3h-1.3zM388.68 423.21h1.3v1.3h-1.3zM388.68 456.63h1.3v1.3h-1.3zM388.68 490.05h1.3v1.3h-1.3zM399.82 155.85h1.3v1.3h-1.3zM399.82 189.27h1.3v1.3h-1.3zM399.82 222.69h1.3v1.3h-1.3zM399.82 256.11h1.3v1.3h-1.3zM399.82 289.53h1.3v1.3h-1.3zM399.82 322.95h1.3v1.3h-1.3zM399.82 356.37h1.3v1.3h-1.3zM399.82 389.79h1.3v1.3h-1.3zM399.82 423.21h1.3v1.3h-1.3zM399.82 456.63h1.3v1.3h-1.3zM399.82 490.05h1.3v1.3h-1.3zM410.96 155.85h1.3v1.3h-1.3zM410.96 166.99h1.3v1.3h-1.3zM410.96 178.13h1.3v1.3h-1.3zM410.96 189.27h1.3v1.3h-1.3zM410.96 200.41h1.3v1.3h-1.3zM410.96 211.55h1.3v1.3h-1.3zM410.96 222.69h1.3v1.3h-1.3zM410.96 233.83h1.3v1.3h-1.3zM410.96 244.97h1.3v1.3h-1.3zM410.96 256.11h1.3v1.3h-1.3zM410.96 267.25h1.3v1.3h-1.3zM410.96 278.39h1.3v1.3h-1.3zM410.96 289.53h1.3v1.3h-1.3zM410.96 300.67h1.3v1.3h-1.3zM410.96 311.81h1.3v1.3h-1.3zM410.96 322.95h1.3v1.3h-1.3zM410.96 334.09h1.3v1.3h-1.3zM410.96 345.23h1.3v1.3h-1.3zM410.96 356.37h1.3v1.3h-1.3zM410.96 367.51h1.3v1.3h-1.3zM410.96 378.65h1.3v1.3h-1.3zM410.96 389.79h1.3v1.3h-1.3zM410.96 400.93h1.3v1.3h-1.3zM410.96 412.07h1.3v1.3h-1.3zM410.96 423.21h1.3v1.3h-1.3zM410.96 434.35h1.3v1.3h-1.3zM410.96 445.49h1.3v1.3h-1.3zM410.96 456.63h1.3v1.3h-1.3zM410.96 467.77h1.3v1.3h-1.3zM410.96 478.91h1.3v1.3h-1.3zM410.96 490.05h1.3v1.3h-1.3zM422.10 155.85h1.3v1.3h-1.3zM422.10 189.27h1.3v1.3h-1.3zM422.10 222.69h1.3v1.3h-1.3zM422.10 256.11h1.3v1.3h-1.3zM422.10 289.53h1.3v1.3h-1.3zM422.10 322.95h1.3v1.3h-1.3zM422.10 356.37h1.3v1.3h-1.3zM422.10 389.79h1.3v1.3h-1.3zM422.10 423.21h1.3v1.3h-1.3zM422.10 456.63h1.3v1.3h-1.3zM422.10 490.05h1.3v1.3h-1.3zM433.24 155.85h1.3v1.3h-1.3zM433.24 189.27h1.3v1.3h-1.3zM433.24 222.69h1.3v1.3h-1.3zM433.24 256.11h1.3v1.3h-1.3zM433.24 289.53h1.3v1.3h-1.3zM433.24 322.95h1.3v1.3h-1.3zM433.24 356.37h1.3v1.3h-1.3zM433.24 389.79h1.3v1.3h-1.3zM433.24 423.21h1.3v1.3h-1.3zM433.24 456.63h1.3v1.3h-1.3zM433.24 490.05h1.3v1.3h-1.3zM444.38 155.85h1.3v1.3h-1.3zM444.38 166.99h1.3v1.3h-1.3zM444.38 178.13h1.3v1.3h-1.3zM444.38 189.27h1.3v1.3h-1.3zM444.38 200.41h1.3v1.3h-1.3zM444.38 211.55h1.3v1.3h-1.3zM444.38 222.69h1.3v1.3h-1.3zM444.38 233.83h1.3v1.3h-1.3zM444.38 244.97h1.3v1.3h-1.3zM444.38 256.11h1.3v1.3h-1.3zM444.38 267.25h1.3v1.3h-1.3zM444.38 278.39h1.3v1.3h-1.3zM444.38 289.53h1.3v1.3h-1.3zM444.38 300.67h1.3v1.3h-1.3zM444.38 311.81h1.3v1.3h-1.3zM444.38 322.95h1.3v1.3h-1.3zM444.38 334.09h1.3v1.3h-1.3zM444.38 345.23h1.3v1.3h-1.3zM444.38 356.37h1.3v1.3h-1.3zM444.38 367.51h1.3v1.3h-1.3zM444.38 378.65h1.3v1.3h-1.3zM444.38 389.79h1.3v1.3h-1.3zM444.38 400.93h1.3v1.3h-1.3zM444.38 412.07h1.3v1.3h-1.3zM444.38 423.21h1.3v1.3h-1.3zM444.38 434.35h1.3v1.3h-1.3zM444.38 445.49h1.3v1.3h-1.3zM444.38 456.63h1.3v1.3h-1.3zM444.38 467.77h1.3v1.3h-1.3zM444.38 478.91h1.3v1.3h-1.3zM444.38 490.05h1.3v1.3h-1.3zM455.52 155.85h1.3v1.3h-1.3zM455.52 189.27h1.3v1.3h-1.3zM455.52 222.69h1.3v1.3h-1.3zM455.52 256.11h1.3v1.3h-1.3zM455.52 289.53h1.3v1.3h-1.3zM455.52 322.95h1.3v1.3h-1.3zM455.52 356.37h1.3v1.3h-1.3zM455.52 389.79h1.3v1.3h-1.3zM455.52 423.21h1.3v1.3h-1.3zM455.52 456.63h1.3v1.3h-1.3zM455.52 490.05h1.3v1.3h-1.3zM466.66 155.85h1.3v1.3h-1.3zM466.66 189.27h1.3v1.3h-1.3zM466.66 222.69h1.3v1.3h-1.3zM466.66 256.11h1.3v1.3h-1.3zM466.66 289.53h1.3v1.3h-1.3zM466.66 322.95h1.3v1.3h-1.3zM466.66 356.37h1.3v1.3h-1.3zM466.66 389.79h1.3v1.3h-1.3zM466.66 423.21h1.3v1.3h-1.3zM466.66 456.63h1.3v1.3h-1.3zM466.66 490.05h1.3v1.3h-1.3zM477.80 155.85h1.3v1.3h-1.3zM477.80 166.99h1.3v1.3h-1.3zM477.80 178.13h1.3v1.3h-1.3zM477.80 189.27h1.3v1.3h-1.3zM477.80 200.41h1.3v1.3h-1.3zM477.80 211.55h1.3v1.3h-1.3zM477.80 222.69h1.3v1.3h-1.3zM477.80 233.83h1.3v1.3h-1.3zM477.80 244.97h1.3v1.3h-1.3zM477.80 256.11h1.3v1.3h-1.3zM477.80 267.25h1.3v1.3h-1.3zM477.80 278.39h1.3v1.3h-1.3zM477.80 289.53h1.3v1.3h-1.3zM477.80 300.67h1.3v1.3h-1.3zM477.80 311.81h1.3v1.3h-1.3zM477.80 322.95h1.3v1.3h-1.3zM477.80 334.09h1.3v1.3h-1.3zM477.80 345.23h1.3v1.3h-1.3zM477.80 356.37h1.3v1.3h-1.3zM477.80 367.51h1.3v1.3h-1.3zM477.80 378.65h1.3v1.3h-1.3zM477.80 389.79h1.3v1.3h-1.3zM477.80 400.93h1.3v1.3h-1.3zM477.80 412.07h1.3v1.3h-1.3zM477.80 423.21h1.3v1.3h-1.3zM477.80 434.35h1.3v1.3h-1.3zM477.80 445.49h1.3v1.3h-1.3zM477.80 456.63h1.3v1.3h-1.3zM477.80 467.77h1.3v1.3h-1.3zM477.80 478.91h1.3v1.3h-1.3zM477.80 490.05h1.3v1.3h-1.3zM488.94 155.85h1.3v1.3h-1.3zM488.94 189.27h1.3v1.3h-1.3zM488.94 222.69h1.3v1.3h-1.3zM488.94 256.11h1.3v1.3h-1.3zM488.94 289.53h1.3v1.3h-1.3zM488.94 322.95h1.3v1.3h-1.3zM488.94 356.37h1.3v1.3h-1.3zM488.94 389.79h1.3v1.3h-1.3zM488.94 423.21h1.3v1.3h-1.3zM488.94 456.63h1.3v1.3h-1.3zM488.94 490.05h1.3v1.3h-1.3zM500.08 155.85h1.3v1.3h-1.3zM500.08 189.27h1.3v1.3h-1.3zM500.08 222.69h1.3v1.3h-1.3zM500.08 256.11h1.3v1.3h-1.3zM500.08 289.53h1.3v1.3h-1.3zM500.08 322.95h1.3v1.3h-1.3zM500.08 356.37h1.3v1.3h-1.3zM500.08 389.79h1.3v1.3h-1.3zM500.08 423.21h1.3v1.3h-1.3zM500.08 456.63h1.3v1.3h-1.3zM500.08 490.05h1.3v1.3h-1.3zM511.22 155.85h1.3v1.3h-1.3zM511.22 166.99h1.3v1.3h-1.3zM511.22 178.13h1.3v1.3h-1.3zM511.22 189.27h1.3v1.3h-1.3zM511.22 200.41h1.3v1.3h-1.3zM511.22 211.55h1.3v1.3h-1.3zM511.22 222.69h1.3v1.3h-1.3zM511.22 233.83h1.3v1.3h-1.3zM511.22 244.97h1.3v1.3h-1.3zM511.22 256.11h1.3v1.3h-1.3zM511.22 267.25h1.3v1.3h-1.3zM511.22 278.39h1.3v1.3h-1.3zM511.22 289.53h1.3v1.3h-1.3zM511.22 300.67h1.3v1.3h-1.3zM511.22 311.81h1.3v1.3h-1.3zM511.22 322.95h1.3v1.3h-1.3zM511.22 334.09h1.3v1.3h-1.3zM511.22 345.23h1.3v1.3h-1.3zM511.22 356.37h1.3v1.3h-1.3zM511.22 367.51h1.3v1.3h-1.3zM511.22 378.65h1.3v1.3h-1.3zM511.22 389.79h1.3v1.3h-1.3zM511.22 400.93h1.3v1.3h-1.3zM511.22 412.07h1.3v1.3h-1.3zM511.22 423.21h1.3v1.3h-1.3zM511.22 434.35h1.3v1.3h-1.3zM511.22 445.49h1.3v1.3h-1.3zM511.22 456.63h1.3v1.3h-1.3zM511.22 467.77h1.3v1.3h-1.3zM511.22 478.91h1.3v1.3h-1.3zM511.22 490.05h1.3v1.3h-1.3zM522.36 155.85h1.3v1.3h-1.3zM522.36 189.27h1.3v1.3h-1.3zM522.36 222.69h1.3v1.3h-1.3zM522.36 256.11h1.3v1.3h-1.3zM522.36 289.53h1.3v1.3h-1.3zM522.36 322.95h1.3v1.3h-1.3zM522.36 356.37h1.3v1.3h-1.3zM522.36 389.79h1.3v1.3h-1.3zM522.36 423.21h1.3v1.3h-1.3zM522.36 456.63h1.3v1.3h-1.3zM522.36 490.05h1.3v1.3h-1.3zM533.50 155.85h1.3v1.3h-1.3zM533.50 189.27h1.3v1.3h-1.3zM533.50 222.69h1.3v1.3h-1.3zM533.50 256.11h1.3v1.3h-1.3zM533.50 289.53h1.3v1.3h-1.3zM533.50 322.95h1.3v1.3h-1.3zM533.50 356.37h1.3v1.3h-1.3zM533.50 389.79h1.3v1.3h-1.3zM533.50 423.21h1.3v1.3h-1.3zM533.50 456.63h1.3v1.3h-1.3zM533.50 490.05h1.3v1.3h-1.3zM544.64 155.85h1.3v1.3h-1.3zM544.64 166.99h1.3v1.3h-1.3zM544.64 178.13h1.3v1.3h-1.3zM544.64 189.27h1.3v1.3h-1.3zM544.64 200.41h1.3v1.3h-1.3zM544.64 211.55h1.3v1.3h-1.3zM544.64 222.69h1.3v1.3h-1.3zM544.64 233.83h1.3v1.3h-1.3zM544.64 244.97h1.3v1.3h-1.3zM544.64 256.11h1.3v1.3h-1.3zM544.64 267.25h1.3v1.3h-1.3zM544.64 278.39h1.3v1.3h-1.3zM544.64 289.53h1.3v1.3h-1.3zM544.64 300.67h1.3v1.3h-1.3zM544.64 311.81h1.3v1.3h-1.3zM544.64 322.95h1.3v1.3h-1.3zM544.64 334.09h1.3v1.3h-1.3zM544.64 345.23h1.3v1.3h-1.3zM544.64 356.37h1.3v1.3h-1.3zM544.64 367.51h1.3v1.3h-1.3zM544.64 378.65h1.3v1.3h-1.3zM544.64 389.79h1.3v1.3h-1.3zM544.64 400.93h1.3v1.3h-1.3zM544.64 412.07h1.3v1.3h-1.3zM544.64 423.21h1.3v1.3h-1.3zM544.64 434.35h1.3v1.3h-1.3zM544.64 445.49h1.3v1.3h-1.3zM544.64 456.63h1.3v1.3h-1.3zM544.64 467.77h1.3v1.3h-1.3zM544.64 478.91h1.3v1.3h-1.3zM544.64 490.05h1.3v1.3h-1.3zM555.78 155.85h1.3v1.3h-1.3zM555.78 189.27h1.3v1.3h-1.3zM555.78 222.69h1.3v1.3h-1.3zM555.78 256.11h1.3v1.3h-1.3zM555.78 289.53h1.3v1.3h-1.3zM555.78 322.95h1.3v1.3h-1.3zM555.78 356.37h1.3v1.3h-1.3zM555.78 389.79h1.3v1.3h-1.3zM555.78 423.21h1.3v1.3h-1.3zM555.78 456.63h1.3v1.3h-1.3zM555.78 490.05h1.3v1.3h-1.3zM566.92 155.85h1.3v1.3h-1.3zM566.92 189.27h1.3v1.3h-1.3zM566.92 222.69h1.3v1.3h-1.3zM566.92 256.11h1.3v1.3h-1.3zM566.92 289.53h1.3v1.3h-1.3zM566.92 322.95h1.3v1.3h-1.3zM566.92 356.37h1.3v1.3h-1.3zM566.92 389.79h1.3v1.3h-1.3zM566.92 423.21h1.3v1.3h-1.3zM566.92 456.63h1.3v1.3h-1.3zM566.92 490.05h1.3v1.3h-1.3zM578.06 155.85h1.3v1.3h-1.3zM578.06 166.99h1.3v1.3h-1.3zM578.06 178.13h1.3v1.3h-1.3zM578.06 189.27h1.3v1.3h-1.3zM578.06 200.41h1.3v1.3h-1.3zM578.06 211.55h1.3v1.3h-1.3zM578.06 222.69h1.3v1.3h-1.3zM578.06 233.83h1.3v1.3h-1.3zM578.06 244.97h1.3v1.3h-1.3zM578.06 256.11h1.3v1.3h-1.3zM578.06 267.25h1.3v1.3h-1.3zM578.06 278.39h1.3v1.3h-1.3zM578.06 289.53h1.3v1.3h-1.3zM578.06 300.67h1.3v1.3h-1.3zM578.06 311.81h1.3v1.3h-1.3zM578.06 322.95h1.3v1.3h-1.3zM578.06 334.09h1.3v1.3h-1.3zM578.06 345.23h1.3v1.3h-1.3zM578.06 356.37h1.3v1.3h-1.3zM578.06 367.51h1.3v1.3h-1.3zM578.06 378.65h1.3v1.3h-1.3zM578.06 389.79h1.3v1.3h-1.3zM578.06 400.93h1.3v1.3h-1.3zM578.06 412.07h1.3v1.3h-1.3zM578.06 423.21h1.3v1.3h-1.3zM578.06 434.35h1.3v1.3h-1.3zM578.06 445.49h1.3v1.3h-1.3zM578.06 456.63h1.3v1.3h-1.3zM578.06 467.77h1.3v1.3h-1.3zM578.06 478.91h1.3v1.3h-1.3zM578.06 490.05h1.3v1.3h-1.3zM589.20 155.85h1.3v1.3h-1.3zM589.20 189.27h1.3v1.3h-1.3zM589.20 222.69h1.3v1.3h-1.3zM589.20 256.11h1.3v1.3h-1.3zM589.20 289.53h1.3v1.3h-1.3zM589.20 322.95h1.3v1.3h-1.3zM589.20 356.37h1.3v1.3h-1.3zM589.20 389.79h1.3v1.3h-1.3zM589.20 423.21h1.3v1.3h-1.3zM589.20 456.63h1.3v1.3h-1.3zM589.20 490.05h1.3v1.3h-1.3zM600.34 155.85h1.3v1.3h-1.3zM600.34 189.27h1.3v1.3h-1.3zM600.34 222.69h1.3v1.3h-1.3zM600.34 256.11h1.3v1.3h-1.3zM600.34 289.53h1.3v1.3h-1.3zM600.34 322.95h1.3v1.3h-1.3zM600.34 356.37h1.3v1.3h-1.3zM600.34 389.79h1.3v1.3h-1.3zM600.34 423.21h1.3v1.3h-1.3zM600.34 456.63h1.3v1.3h-1.3zM600.34 490.05h1.3v1.3h-1.3zM611.48 155.85h1.3v1.3h-1.3zM611.48 166.99h1.3v1.3h-1.3zM611.48 178.13h1.3v1.3h-1.3zM611.48 189.27h1.3v1.3h-1.3zM611.48 200.41h1.3v1.3h-1.3zM611.48 211.55h1.3v1.3h-1.3zM611.48 222.69h1.3v1.3h-1.3zM611.48 233.83h1.3v1.3h-1.3zM611.48 244.97h1.3v1.3h-1.3zM611.48 256.11h1.3v1.3h-1.3zM611.48 267.25h1.3v1.3h-1.3zM611.48 278.39h1.3v1.3h-1.3zM611.48 289.53h1.3v1.3h-1.3zM611.48 300.67h1.3v1.3h-1.3zM611.48 311.81h1.3v1.3h-1.3zM611.48 322.95h1.3v1.3h-1.3zM611.48 334.09h1.3v1.3h-1.3zM611.48 345.23h1.3v1.3h-1.3zM611.48 356.37h1.3v1.3h-1.3zM611.48 367.51h1.3v1.3h-1.3zM611.48 378.65h1.3v1.3h-1.3zM611.48 389.79h1.3v1.3h-1.3zM611.48 400.93h1.3v1.3h-1.3zM611.48 412.07h1.3v1.3h-1.3zM611.48 423.21h1.3v1.3h-1.3zM611.48 434.35h1.3v1.3h-1.3zM611.48 445.49h1.3v1.3h-1.3zM611.48 456.63h1.3v1.3h-1.3zM611.48 467.77h1.3v1.3h-1.3zM611.48 478.91h1.3v1.3h-1.3zM611.48 490.05h1.3v1.3h-1.3zM622.62 155.85h1.3v1.3h-1.3zM622.62 189.27h1.3v1.3h-1.3zM622.62 222.69h1.3v1.3h-1.3zM622.62 256.11h1.3v1.3h-1.3zM622.62 289.53h1.3v1.3h-1.3zM622.62 322.95h1.3v1.3h-1.3zM622.62 356.37h1.3v1.3h-1.3zM622.62 389.79h1.3v1.3h-1.3zM622.62 423.21h1.3v1.3h-1.3zM622.62 456.63h1.3v1.3h-1.3zM622.62 490.05h1.3v1.3h-1.3zM633.76 155.85h1.3v1.3h-1.3zM633.76 189.27h1.3v1.3h-1.3zM633.76 222.69h1.3v1.3h-1.3zM633.76 256.11h1.3v1.3h-1.3zM633.76 289.53h1.3v1.3h-1.3zM633.76 322.95h1.3v1.3h-1.3zM633.76 356.37h1.3v1.3h-1.3zM633.76 389.79h1.3v1.3h-1.3zM633.76 423.21h1.3v1.3h-1.3zM633.76 456.63h1.3v1.3h-1.3zM633.76 490.05h1.3v1.3h-1.3zM644.90 155.85h1.3v1.3h-1.3zM644.90 166.99h1.3v1.3h-1.3zM644.90 178.13h1.3v1.3h-1.3zM644.90 189.27h1.3v1.3h-1.3zM644.90 200.41h1.3v1.3h-1.3zM644.90 211.55h1.3v1.3h-1.3zM644.90 222.69h1.3v1.3h-1.3zM644.90 233.83h1.3v1.3h-1.3zM644.90 244.97h1.3v1.3h-1.3zM644.90 256.11h1.3v1.3h-1.3zM644.90 267.25h1.3v1.3h-1.3zM644.90 278.39h1.3v1.3h-1.3zM644.90 289.53h1.3v1.3h-1.3zM644.90 300.67h1.3v1.3h-1.3zM644.90 311.81h1.3v1.3h-1.3zM644.90 322.95h1.3v1.3h-1.3zM644.90 334.09h1.3v1.3h-1.3zM644.90 345.23h1.3v1.3h-1.3zM644.90 356.37h1.3v1.3h-1.3zM644.90 367.51h1.3v1.3h-1.3zM644.90 378.65h1.3v1.3h-1.3zM644.90 389.79h1.3v1.3h-1.3zM644.90 400.93h1.3v1.3h-1.3zM644.90 412.07h1.3v1.3h-1.3zM644.90 423.21h1.3v1.3h-1.3zM644.90 434.35h1.3v1.3h-1.3zM644.90 445.49h1.3v1.3h-1.3zM644.90 456.63h1.3v1.3h-1.3zM644.90 467.77h1.3v1.3h-1.3zM644.90 478.91h1.3v1.3h-1.3zM644.90 490.05h1.3v1.3h-1.3zM656.04 155.85h1.3v1.3h-1.3zM656.04 189.27h1.3v1.3h-1.3zM656.04 222.69h1.3v1.3h-1.3zM656.04 256.11h1.3v1.3h-1.3zM656.04 289.53h1.3v1.3h-1.3zM656.04 322.95h1.3v1.3h-1.3zM656.04 356.37h1.3v1.3h-1.3zM656.04 389.79h1.3v1.3h-1.3zM656.04 423.21h1.3v1.3h-1.3zM656.04 456.63h1.3v1.3h-1.3zM656.04 490.05h1.3v1.3h-1.3zM667.18 155.85h1.3v1.3h-1.3zM667.18 189.27h1.3v1.3h-1.3zM667.18 222.69h1.3v1.3h-1.3zM667.18 256.11h1.3v1.3h-1.3zM667.18 289.53h1.3v1.3h-1.3zM667.18 322.95h1.3v1.3h-1.3zM667.18 356.37h1.3v1.3h-1.3zM667.18 389.79h1.3v1.3h-1.3zM667.18 423.21h1.3v1.3h-1.3zM667.18 456.63h1.3v1.3h-1.3zM667.18 490.05h1.3v1.3h-1.3zM678.32 155.85h1.3v1.3h-1.3zM678.32 166.99h1.3v1.3h-1.3zM678.32 178.13h1.3v1.3h-1.3zM678.32 189.27h1.3v1.3h-1.3zM678.32 200.41h1.3v1.3h-1.3zM678.32 211.55h1.3v1.3h-1.3zM678.32 222.69h1.3v1.3h-1.3zM678.32 233.83h1.3v1.3h-1.3zM678.32 244.97h1.3v1.3h-1.3zM678.32 256.11h1.3v1.3h-1.3zM678.32 267.25h1.3v1.3h-1.3zM678.32 278.39h1.3v1.3h-1.3zM678.32 289.53h1.3v1.3h-1.3zM678.32 300.67h1.3v1.3h-1.3zM678.32 311.81h1.3v1.3h-1.3zM678.32 322.95h1.3v1.3h-1.3zM678.32 334.09h1.3v1.3h-1.3zM678.32 345.23h1.3v1.3h-1.3zM678.32 356.37h1.3v1.3h-1.3zM678.32 367.51h1.3v1.3h-1.3zM678.32 378.65h1.3v1.3h-1.3zM678.32 389.79h1.3v1.3h-1.3zM678.32 400.93h1.3v1.3h-1.3zM678.32 412.07h1.3v1.3h-1.3zM678.32 423.21h1.3v1.3h-1.3zM678.32 434.35h1.3v1.3h-1.3zM678.32 445.49h1.3v1.3h-1.3zM678.32 456.63h1.3v1.3h-1.3zM678.32 467.77h1.3v1.3h-1.3zM678.32 478.91h1.3v1.3h-1.3zM678.32 490.05h1.3v1.3h-1.3zM689.46 155.85h1.3v1.3h-1.3zM689.46 189.27h1.3v1.3h-1.3zM689.46 222.69h1.3v1.3h-1.3zM689.46 256.11h1.3v1.3h-1.3zM689.46 289.53h1.3v1.3h-1.3zM689.46 322.95h1.3v1.3h-1.3zM689.46 356.37h1.3v1.3h-1.3zM689.46 389.79h1.3v1.3h-1.3zM689.46 423.21h1.3v1.3h-1.3zM689.46 456.63h1.3v1.3h-1.3zM689.46 490.05h1.3v1.3h-1.3zM700.60 155.85h1.3v1.3h-1.3zM700.60 189.27h1.3v1.3h-1.3zM700.60 222.69h1.3v1.3h-1.3zM700.60 256.11h1.3v1.3h-1.3zM700.60 289.53h1.3v1.3h-1.3zM700.60 322.95h1.3v1.3h-1.3zM700.60 356.37h1.3v1.3h-1.3zM700.60 389.79h1.3v1.3h-1.3zM700.60 423.21h1.3v1.3h-1.3zM700.60 456.63h1.3v1.3h-1.3zM700.60 490.05h1.3v1.3h-1.3zM711.74 155.85h1.3v1.3h-1.3zM711.74 166.99h1.3v1.3h-1.3zM711.74 178.13h1.3v1.3h-1.3zM711.74 189.27h1.3v1.3h-1.3zM711.74 200.41h1.3v1.3h-1.3zM711.74 211.55h1.3v1.3h-1.3zM711.74 222.69h1.3v1.3h-1.3zM711.74 233.83h1.3v1.3h-1.3zM711.74 244.97h1.3v1.3h-1.3zM711.74 256.11h1.3v1.3h-1.3zM711.74 267.25h1.3v1.3h-1.3zM711.74 278.39h1.3v1.3h-1.3zM711.74 289.53h1.3v1.3h-1.3zM711.74 300.67h1.3v1.3h-1.3zM711.74 311.81h1.3v1.3h-1.3zM711.74 322.95h1.3v1.3h-1.3zM711.74 334.09h1.3v1.3h-1.3zM711.74 345.23h1.3v1.3h-1.3zM711.74 356.37h1.3v1.3h-1.3zM711.74 367.51h1.3v1.3h-1.3zM711.74 378.65h1.3v1.3h-1.3zM711.74 389.79h1.3v1.3h-1.3zM711.74 400.93h1.3v1.3h-1.3zM711.74 412.07h1.3v1.3h-1.3zM711.74 423.21h1.3v1.3h-1.3zM711.74 434.35h1.3v1.3h-1.3zM711.74 445.49h1.3v1.3h-1.3zM711.74 456.63h1.3v1.3h-1.3zM711.74 467.77h1.3v1.3h-1.3zM711.74 478.91h1.3v1.3h-1.3zM711.74 490.05h1.3v1.3h-1.3zM722.88 155.85h1.3v1.3h-1.3zM722.88 189.27h1.3v1.3h-1.3zM722.88 222.69h1.3v1.3h-1.3zM722.88 256.11h1.3v1.3h-1.3zM722.88 289.53h1.3v1.3h-1.3zM722.88 322.95h1.3v1.3h-1.3zM722.88 356.37h1.3v1.3h-1.3zM722.88 389.79h1.3v1.3h-1.3zM722.88 423.21h1.3v1.3h-1.3zM722.88 456.63h1.3v1.3h-1.3zM722.88 490.05h1.3v1.3h-1.3zM734.02 155.85h1.3v1.3h-1.3zM734.02 189.27h1.3v1.3h-1.3zM734.02 222.69h1.3v1.3h-1.3zM734.02 256.11h1.3v1.3h-1.3zM734.02 289.53h1.3v1.3h-1.3zM734.02 322.95h1.3v1.3h-1.3zM734.02 356.37h1.3v1.3h-1.3zM734.02 389.79h1.3v1.3h-1.3zM734.02 423.21h1.3v1.3h-1.3zM734.02 456.63h1.3v1.3h-1.3zM734.02 490.05h1.3v1.3h-1.3zM745.16 155.85h1.3v1.3h-1.3zM745.16 166.99h1.3v1.3h-1.3zM745.16 178.13h1.3v1.3h-1.3zM745.16 189.27h1.3v1.3h-1.3zM745.16 200.41h1.3v1.3h-1.3zM745.16 211.55h1.3v1.3h-1.3zM745.16 222.69h1.3v1.3h-1.3zM745.16 233.83h1.3v1.3h-1.3zM745.16 244.97h1.3v1.3h-1.3zM745.16 256.11h1.3v1.3h-1.3zM745.16 267.25h1.3v1.3h-1.3zM745.16 278.39h1.3v1.3h-1.3zM745.16 289.53h1.3v1.3h-1.3zM745.16 300.67h1.3v1.3h-1.3zM745.16 311.81h1.3v1.3h-1.3zM745.16 322.95h1.3v1.3h-1.3zM745.16 334.09h1.3v1.3h-1.3zM745.16 345.23h1.3v1.3h-1.3zM745.16 356.37h1.3v1.3h-1.3zM745.16 367.51h1.3v1.3h-1.3zM745.16 378.65h1.3v1.3h-1.3zM745.16 389.79h1.3v1.3h-1.3zM745.16 400.93h1.3v1.3h-1.3zM745.16 412.07h1.3v1.3h-1.3zM745.16 423.21h1.3v1.3h-1.3zM745.16 434.35h1.3v1.3h-1.3zM745.16 445.49h1.3v1.3h-1.3zM745.16 456.63h1.3v1.3h-1.3zM745.16 467.77h1.3v1.3h-1.3zM745.16 478.91h1.3v1.3h-1.3zM745.16 490.05h1.3v1.3h-1.3zM756.30 155.85h1.3v1.3h-1.3zM756.30 189.27h1.3v1.3h-1.3zM756.30 222.69h1.3v1.3h-1.3zM756.30 256.11h1.3v1.3h-1.3zM756.30 289.53h1.3v1.3h-1.3zM756.30 322.95h1.3v1.3h-1.3zM756.30 356.37h1.3v1.3h-1.3zM756.30 389.79h1.3v1.3h-1.3zM756.30 423.21h1.3v1.3h-1.3zM756.30 456.63h1.3v1.3h-1.3zM756.30 490.05h1.3v1.3h-1.3zM767.44 155.85h1.3v1.3h-1.3zM767.44 189.27h1.3v1.3h-1.3zM767.44 222.69h1.3v1.3h-1.3zM767.44 256.11h1.3v1.3h-1.3zM767.44 289.53h1.3v1.3h-1.3zM767.44 322.95h1.3v1.3h-1.3zM767.44 356.37h1.3v1.3h-1.3zM767.44 389.79h1.3v1.3h-1.3zM767.44 423.21h1.3v1.3h-1.3zM767.44 456.63h1.3v1.3h-1.3zM767.44 490.05h1.3v1.3h-1.3z" fill="#666666" stroke="none" stroke-width="1" />
</svg>
<div class="t" style="left:16.00px;top:9px;font-size:10px;line-height:10px;color:#FFF7F4;font-weight:normal;transform:scaleX(0.8750);-webkit-text-stroke:0.3px currentColor">File</div>
<div class="t" style="left:57.40px;top:9px;font-size:10px;line-height:10px;color:#FFF7F4;font-weight:normal;transform:scaleX(0.9692);-webkit-text-stroke:0.3px currentColor">Home</div>
<div class="t" style="left:104.00px;top:9px;font-size:10px;line-height:10px;color:#FFF7F4;font-weight:normal;transform:scaleX(0.8960);-webkit-text-stroke:0.3px currentColor">Insert</div>
<div class="t" style="left:148.00px;top:9px;font-size:10px;line-height:10px;color:#FFF7F4;font-weight:normal;transform:scaleX(0.8903);-webkit-text-stroke:0.3px currentColor">Design</div>
<div class="t" style="left:198.00px;top:9px;font-size:10px;line-height:10px;color:#FFF7F4;font-weight:normal;transform:scaleX(0.8653);-webkit-text-stroke:0.3px currentColor">Transitions</div>
<div class="t" style="left:262.00px;top:9px;font-size:10px;line-height:10px;color:#FFF7F4;font-weight:normal;transform:scaleX(0.9440);-webkit-text-stroke:0.3px currentColor">Animations</div>
<div class="t" style="left:330.40px;top:9px;font-size:10px;line-height:10px;color:#FFF7F4;font-weight:normal;transform:scaleX(0.8960);-webkit-text-stroke:0.3px currentColor">Slide Show</div>
<div class="t" style="left:396.40px;top:9px;font-size:10px;line-height:10px;color:#FFF7F4;font-weight:normal;transform:scaleX(0.8938);-webkit-text-stroke:0.3px currentColor">Record</div>
<div class="t" style="left:446.60px;top:9px;font-size:10px;line-height:10px;color:#FFF7F4;font-weight:normal;transform:scaleX(0.8606);-webkit-text-stroke:0.3px currentColor">Review</div>
<div class="t" style="left:496.00px;top:9px;font-size:10px;line-height:10px;color:#BF5036;font-weight:normal;transform:scaleX(0.8909);">View</div>
<div class="t" style="left:537.00px;top:9px;font-size:10px;line-height:10px;color:#FFF7F4;font-weight:normal;transform:scaleX(0.9238);-webkit-text-stroke:0.3px currentColor">Help</div>
<div class="t" style="left:600.60px;top:9px;font-size:10px;line-height:10px;color:#FFF7F4;font-weight:normal;transform:scaleX(0.9439);-webkit-text-stroke:0.3px currentColor">Tell me what you want to do</div>
<div class="t" style="left:750.60px;top:9px;font-size:11px;line-height:11px;color:#FFF7F4;font-weight:normal;transform:scaleX(0.9345);-webkit-text-stroke:0.6px currentColor">Share</div>
<div class="t" style="left:8.30px;top:59px;font-size:10px;line-height:10px;color:#363636;font-weight:normal;transform:scaleX(0.9594);">Normal</div>
<div class="t" style="left:43.50px;top:59px;font-size:10px;line-height:10px;color:#363636;font-weight:normal;transform:scaleX(0.9710);">Outline</div>
<div class="t" style="left:48.75px;top:71px;font-size:10px;line-height:10px;color:#363636;font-weight:normal;transform:scaleX(0.8750);">View</div>
<div class="t" style="left:82.00px;top:59px;font-size:10px;line-height:10px;color:#363636;font-weight:normal;transform:scaleX(0.8909);">Slide</div>
<div class="t" style="left:79.90px;top:71px;font-size:10px;line-height:10px;color:#363636;font-weight:normal;transform:scaleX(0.8685);">Sorter</div>
<div class="t" style="left:113.20px;top:59px;font-size:10px;line-height:10px;color:#363636;font-weight:normal;transform:scaleX(0.8865);">Notes</div>
<div class="t" style="left:115.25px;top:71px;font-size:10px;line-height:10px;color:#363636;font-weight:normal;transform:scaleX(0.8761);">Page</div>
<div class="t" style="left:143.25px;top:59px;font-size:10px;line-height:10px;color:#363636;font-weight:normal;transform:scaleX(0.8905);">Reading</div>
<div class="t" style="left:150.25px;top:71px;font-size:10px;line-height:10px;color:#363636;font-weight:normal;transform:scaleX(0.8932);">View</div>
<div class="t" style="left:54.40px;top:86px;font-size:10px;line-height:10px;color:#484848;font-weight:normal;transform:scaleX(0.8791);">Presentation Views</div>
<div class="t" style="left:197.90px;top:59px;font-size:10px;line-height:10px;color:#363636;font-weight:normal;transform:scaleX(0.8864);">Slide</div>
<div class="t" style="left:194.30px;top:71px;font-size:10px;line-height:10px;color:#363636;font-weight:normal;transform:scaleX(0.8742);">Master</div>
<div class="t" style="left:226.30px;top:59px;font-size:10px;line-height:10px;color:#363636;font-weight:normal;transform:scaleX(0.9395);">Handout</div>
<div class="t" style="left:230.60px;top:71px;font-size:10px;line-height:10px;color:#363636;font-weight:normal;transform:scaleX(0.8742);">Master</div>
<div class="t" style="left:269.00px;top:59px;font-size:10px;line-height:10px;color:#363636;font-weight:normal;transform:scaleX(0.9000);">Notes</div>
<div class="t" style="left:267.70px;top:71px;font-size:10px;line-height:10px;color:#363636;font-weight:normal;transform:scaleX(0.8806);">Master</div>
<div class="t" style="left:217.70px;top:86px;font-size:10px;line-height:10px;color:#484848;font-weight:normal;transform:scaleX(0.8700);">Master Views</div>
<div class="t" style="left:326.80px;top:32px;font-size:10px;line-height:10px;color:#363636;font-weight:normal;transform:scaleX(0.8750);">Ruler</div>
<div class="t" style="left:326.80px;top:50px;font-size:10px;line-height:10px;color:#363636;font-weight:normal;transform:scaleX(0.8850);">Gridlines</div>
<div class="t" style="left:326.80px;top:68px;font-size:10px;line-height:10px;color:#363636;font-weight:normal;transform:scaleX(0.8688);">Guides</div>
<div class="t" style="left:372.00px;top:59px;font-size:10px;line-height:10px;color:#363636;font-weight:normal;transform:scaleX(0.9154);">Notes</div>
<div class="t" style="left:337.70px;top:86px;font-size:10px;line-height:10px;color:#484848;font-weight:normal;transform:scaleX(0.9000);">Show</div>
<div class="t" style="left:417.10px;top:59px;font-size:10px;line-height:10px;color:#363636;font-weight:normal;transform:scaleX(0.9960);">Zoom</div>
<div class="t" style="left:454.70px;top:59px;font-size:10px;line-height:10px;color:#363636;font-weight:normal;transform:scaleX(0.9545);">Fit to</div>
<div class="t" style="left:447.70px;top:71px;font-size:10px;line-height:10px;color:#363636;font-weight:normal;transform:scaleX(0.9472);">Window</div>
<div class="t" style="left:436.70px;top:86px;font-size:10px;line-height:10px;color:#484848;font-weight:normal;transform:scaleX(0.8920);">Zoom</div>
<div class="t" style="left:514.40px;top:32px;font-size:10px;line-height:10px;color:#363636;font-weight:normal;transform:scaleX(0.9250);">Color</div>
<div class="t" style="left:514.40px;top:50px;font-size:10px;line-height:10px;color:#363636;font-weight:normal;transform:scaleX(0.8578);">Grayscale</div>
<div class="t" style="left:514.40px;top:68px;font-size:10px;line-height:10px;color:#363636;font-weight:normal;transform:scaleX(0.9167);">Black and White</div>
<div class="t" style="left:509.60px;top:86px;font-size:10px;line-height:10px;color:#484848;font-weight:normal;transform:scaleX(0.8597);">Color/Grayscale</div>
<div class="t" style="left:607.80px;top:59px;font-size:10px;line-height:10px;color:#363636;font-weight:normal;transform:scaleX(0.9350);">New</div>
<div class="t" style="left:600.30px;top:71px;font-size:10px;line-height:10px;color:#363636;font-weight:normal;transform:scaleX(0.9361);">Window</div>
<div class="t" style="left:672.70px;top:59px;font-size:10px;line-height:10px;color:#363636;font-weight:normal;transform:scaleX(0.9207);">Switch</div>
<div class="t" style="left:662.80px;top:71px;font-size:10px;line-height:10px;color:#363636;font-weight:normal;transform:scaleX(0.8341);">Windows</div>
<div class="t" style="left:638.00px;top:86px;font-size:10px;line-height:10px;color:#484848;font-weight:normal;transform:scaleX(0.9306);">Window</div>
<div class="t" style="left:726.00px;top:59px;font-size:10px;line-height:10px;color:#363636;font-weight:normal;transform:scaleX(0.9152);">Macros</div>
<div class="t" style="left:726.90px;top:86px;font-size:10px;line-height:10px;color:#484848;font-weight:normal;transform:scaleX(0.8545);">Macros</div>
<div class="t" style="left:8.50px;top:109px;font-size:12.5px;line-height:12.5px;color:#555555;font-weight:normal;transform:scaleX(1.0000);">1</div>
<div class="t" style="left:9.00px;top:174px;font-size:12.5px;line-height:12.5px;color:#D9573A;font-weight:normal;transform:scaleX(1.0000);">2</div>
<div class="t" style="left:9.00px;top:239px;font-size:12.5px;line-height:12.5px;color:#555555;font-weight:normal;transform:scaleX(1.0000);">3</div>
<div class="t" style="left:9.00px;top:304px;font-size:12.5px;line-height:12.5px;color:#555555;font-weight:normal;transform:scaleX(1.0000);">4</div>
<div class="t" style="left:9.00px;top:369px;font-size:12.5px;line-height:12.5px;color:#555555;font-weight:normal;transform:scaleX(1.0000);">5</div>
<div class="t" style="left:9.00px;top:434px;font-size:12.5px;line-height:12.5px;color:#555555;font-weight:normal;transform:scaleX(1.0000);">6</div>
<div class="t" style="left:9.00px;top:499px;font-size:12.5px;line-height:12.5px;color:#555555;font-weight:normal;transform:scaleX(1.0000);">7</div>
<div class="t" style="left:183.21px;top:101px;width:30px;text-align:center;font-size:9px;line-height:10px;color:#333">16</div>
<div class="t" style="left:218.29px;top:101px;width:30px;text-align:center;font-size:9px;line-height:10px;color:#333">14</div>
<div class="t" style="left:253.37px;top:101px;width:30px;text-align:center;font-size:9px;line-height:10px;color:#333">12</div>
<div class="t" style="left:288.45px;top:101px;width:30px;text-align:center;font-size:9px;line-height:10px;color:#333">10</div>
<div class="t" style="left:323.53px;top:101px;width:30px;text-align:center;font-size:9px;line-height:10px;color:#333">8</div>
<div class="t" style="left:358.61px;top:101px;width:30px;text-align:center;font-size:9px;line-height:10px;color:#333">6</div>
<div class="t" style="left:393.69px;top:101px;width:30px;text-align:center;font-size:9px;line-height:10px;color:#333">4</div>
<div class="t" style="left:428.77px;top:101px;width:30px;text-align:center;font-size:9px;line-height:10px;color:#333">2</div>
<div class="t" style="left:463.85px;top:101px;width:30px;text-align:center;font-size:9px;line-height:10px;color:#333">0</div>
<div class="t" style="left:498.93px;top:101px;width:30px;text-align:center;font-size:9px;line-height:10px;color:#333">2</div>
<div class="t" style="left:534.01px;top:101px;width:30px;text-align:center;font-size:9px;line-height:10px;color:#333">4</div>
<div class="t" style="left:569.09px;top:101px;width:30px;text-align:center;font-size:9px;line-height:10px;color:#333">6</div>
<div class="t" style="left:604.17px;top:101px;width:30px;text-align:center;font-size:9px;line-height:10px;color:#333">8</div>
<div class="t" style="left:639.25px;top:101px;width:30px;text-align:center;font-size:9px;line-height:10px;color:#333">10</div>
<div class="t" style="left:674.33px;top:101px;width:30px;text-align:center;font-size:9px;line-height:10px;color:#333">12</div>
<div class="t" style="left:709.41px;top:101px;width:30px;text-align:center;font-size:9px;line-height:10px;color:#333">14</div>
<div class="t" style="left:744.49px;top:101px;width:30px;text-align:center;font-size:9px;line-height:10px;color:#333">16</div>
<div class="t" style="left:147.5px;top:177.18px;width:20px;height:10px;font-size:9.5px;line-height:10px;text-align:center;color:#333;transform:rotate(-90deg);transform-origin:50% 50%">8</div>
<div class="t" style="left:147.5px;top:212.26px;width:20px;height:10px;font-size:9.5px;line-height:10px;text-align:center;color:#333;transform:rotate(-90deg);transform-origin:50% 50%">6</div>
<div class="t" style="left:147.5px;top:247.34px;width:20px;height:10px;font-size:9.5px;line-height:10px;text-align:center;color:#333;transform:rotate(-90deg);transform-origin:50% 50%">4</div>
<div class="t" style="left:147.5px;top:282.42px;width:20px;height:10px;font-size:9.5px;line-height:10px;text-align:center;color:#333;transform:rotate(-90deg);transform-origin:50% 50%">2</div>
<div class="t" style="left:147.5px;top:317.5px;width:20px;height:10px;font-size:9.5px;line-height:10px;text-align:center;color:#333;transform:rotate(-90deg);transform-origin:50% 50%">0</div>
<div class="t" style="left:147.5px;top:352.58px;width:20px;height:10px;font-size:9.5px;line-height:10px;text-align:center;color:#333;transform:rotate(-90deg);transform-origin:50% 50%">2</div>
<div class="t" style="left:147.5px;top:387.65999999999997px;width:20px;height:10px;font-size:9.5px;line-height:10px;text-align:center;color:#333;transform:rotate(-90deg);transform-origin:50% 50%">4</div>
<div class="t" style="left:147.5px;top:422.74px;width:20px;height:10px;font-size:9.5px;line-height:10px;text-align:center;color:#333;transform:rotate(-90deg);transform-origin:50% 50%">6</div>
<div class="t" style="left:147.5px;top:457.82px;width:20px;height:10px;font-size:9.5px;line-height:10px;text-align:center;color:#333;transform:rotate(-90deg);transform-origin:50% 50%">8</div>
</body></html>
